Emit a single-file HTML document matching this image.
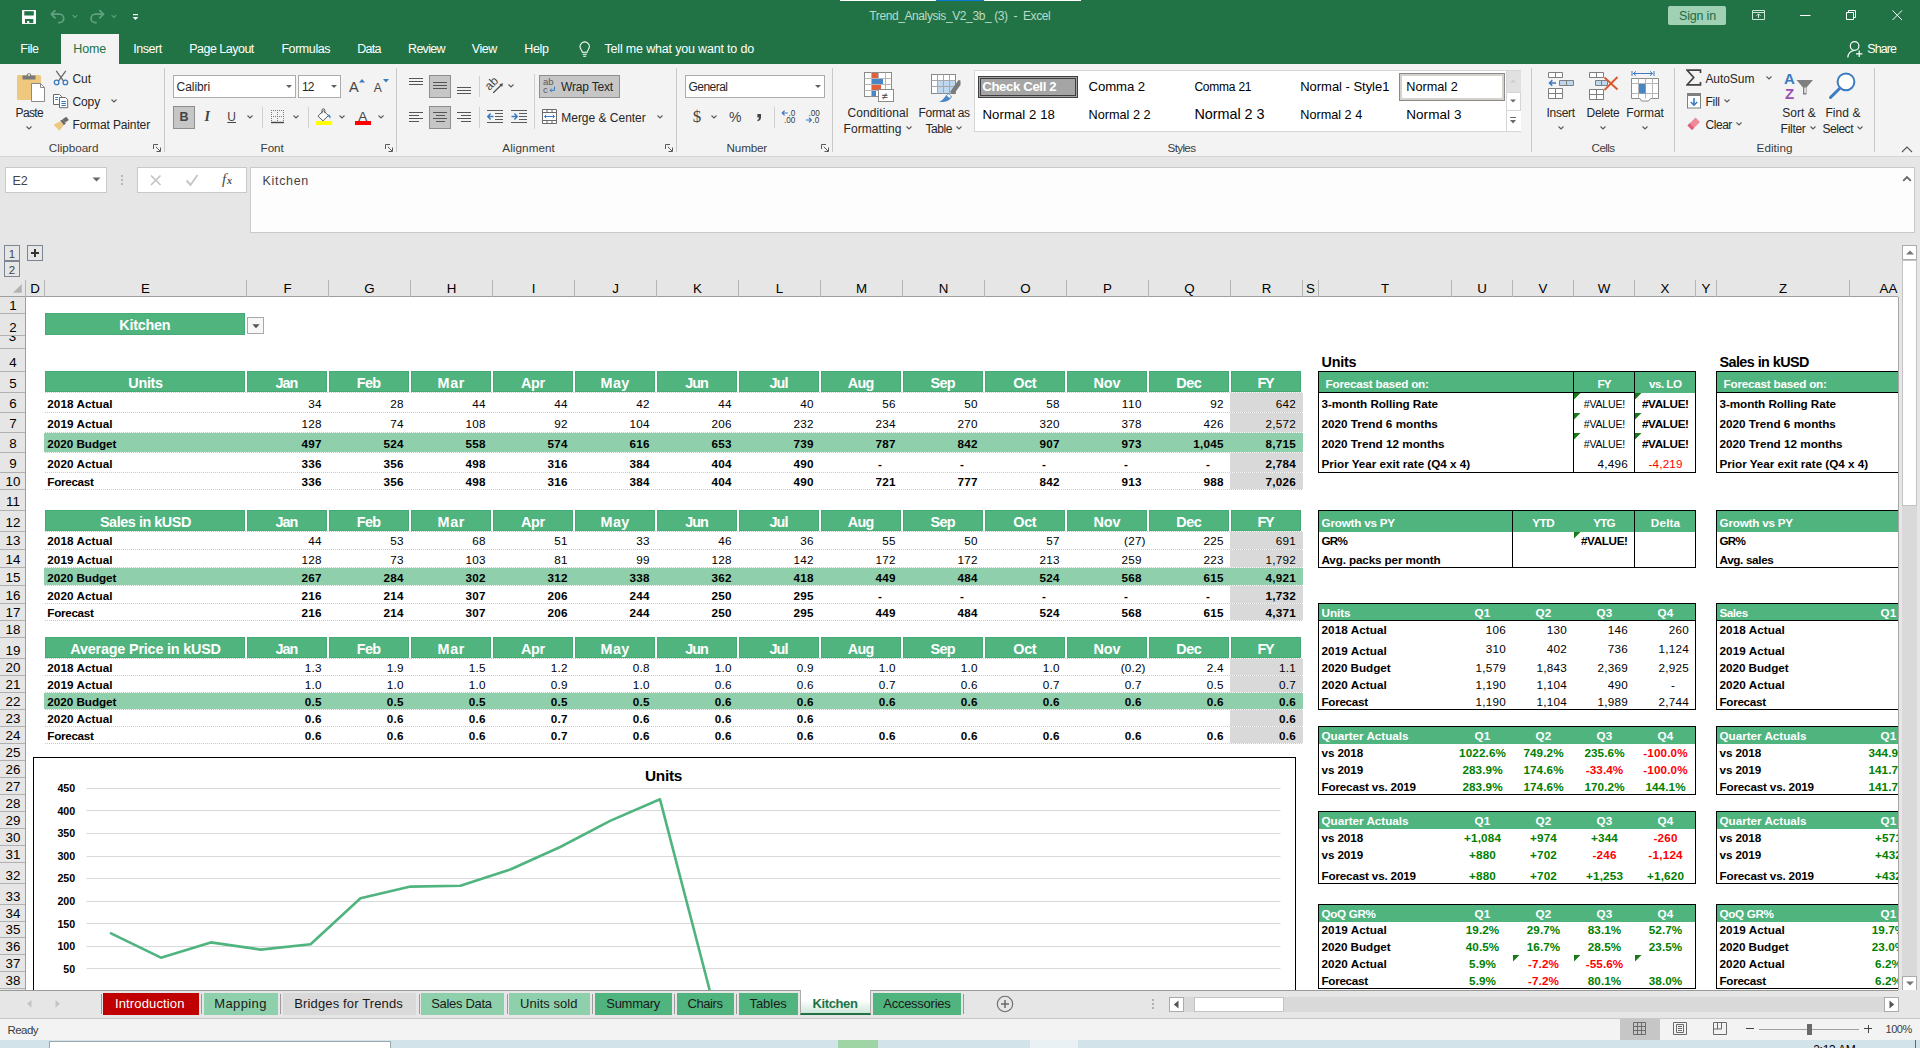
<!DOCTYPE html>
<html><head><meta charset="utf-8"><title>Trend_Analysis_V2_3b_ (3) - Excel</title>
<style>
html,body{margin:0;padding:0;background:#fff}
body{width:1920px;height:1048px;overflow:hidden;position:relative;font-family:"Liberation Sans",sans-serif}
#app{position:absolute;left:0;top:0;width:1920px;height:1048px;overflow:hidden}
#app div,#app svg{position:absolute}
.t{white-space:pre;line-height:16px;height:16px}
#gridclip{left:0;top:0;width:1898px;height:990px;overflow:hidden}
</style></head><body><div id="app">
<div style="left:0px;top:0px;width:1920px;height:64px;background:#217346;"></div>
<div style="left:840px;top:0px;width:241px;height:1px;background:#ffffff;"></div>
<div style="left:936px;top:0px;width:48px;height:1px;background:#0a78d4;"></div>
<svg style="left:0;top:0" width="160" height="32" viewBox="0 0 160 32">
<rect x="22" y="10" width="14" height="14" rx="0.800" fill="#fff"/>
<rect x="24.300" y="11.200" width="9.500" height="4.300" fill="#217346"/>
<rect x="25" y="19" width="8.300" height="4.100" fill="#217346"/>
<rect x="27.100" y="21" width="2.200" height="2.100" fill="#fff"/>
<g fill="none" stroke="#62a17f" stroke-width="1.800" stroke-linecap="round" stroke-linejoin="round">
<path d="M55 10.600L51.300 14.200 55 17.800"/><path d="M51.800 14.200h7.700a4.200 4.200 0 0 1 0 8.400h-.8"/>
<path d="M99.800 10.600l3.700 3.600-3.700 3.600"/><path d="M103 14.200h-7.700a4.200 4.200 0 0 0 0 8.400h.8"/>
</g>
<g fill="none" stroke="#62a17f" stroke-width="1.100"><path d="M72.600 15.200l2.300 2.300 2.300-2.300"/><path d="M111.600 15.200l2.300 2.300 2.300-2.300"/></g>
<rect x="133" y="14" width="5" height="1.200" fill="#fff"/><path d="M132.700 17h5.600l-2.800 3z" fill="#fff"/>
</svg>
<div class="t" style="left:869.30px;top:8px;font-size:12px;letter-spacing:-0.400px;color:#b9dcc6;">Trend_Analysis_V2_3b_ (3)  -  Excel</div>
<div style="left:1668px;top:6px;width:58px;height:19px;background:#a1d1b5;border-radius:2px;"></div>
<div class="t" style="left:1679.00px;top:8px;font-size:12.5px;letter-spacing:-0.174px;color:#1e6b41;">Sign in</div>
<svg style="left:1745px;top:5px" width="170" height="22" viewBox="0 0 170 22"><g fill="none" stroke="#cfe6d8" stroke-width="1">
<path d="M7.5 5.5h12v9h-12z"/><path d="M7.5 7.5h12"/><path d="M13.5 13v-4m-2 1.8l2-2 2 2"/>
<path d="M55 10.5h10.5" stroke="#fff"/>
<path d="M101.500 7.500h7v7h-7z" stroke="#fff"/><path d="M103.500 7.500v-2h7v7h-2" stroke="#fff"/>
<path d="M147.5 5.5l9.5 9.5m0-9.5l-9.5 9.5" stroke="#fff"/>
</g></svg>
<div style="left:61px;top:34px;width:58px;height:30px;background:#f3f3f3;"></div>
<div class="t" style="left:20.30px;top:41px;font-size:12.5px;letter-spacing:-0.535px;color:#fff;">File</div>
<div class="t" style="left:73.30px;top:41px;font-size:12.5px;letter-spacing:-0.161px;color:#217346;">Home</div>
<div class="t" style="left:133.30px;top:41px;font-size:12.5px;letter-spacing:-0.477px;color:#fff;">Insert</div>
<div class="t" style="left:189.20px;top:41px;font-size:12.5px;letter-spacing:-0.509px;color:#fff;">Page Layout</div>
<div class="t" style="left:281.40px;top:41px;font-size:12.5px;letter-spacing:-0.424px;color:#fff;">Formulas</div>
<div class="t" style="left:357.20px;top:41px;font-size:12.5px;letter-spacing:-0.701px;color:#fff;">Data</div>
<div class="t" style="left:408.10px;top:41px;font-size:12.5px;letter-spacing:-0.731px;color:#fff;">Review</div>
<div class="t" style="left:471.80px;top:41px;font-size:12.5px;letter-spacing:-0.492px;color:#fff;">View</div>
<div class="t" style="left:524.30px;top:41px;font-size:12.5px;letter-spacing:-0.327px;color:#fff;">Help</div>
<div class="t" style="left:604.50px;top:41px;font-size:12.5px;letter-spacing:-0.176px;color:#fff;">Tell me what you want to do</div>
<svg style="left:577px;top:40px" width="16" height="18" viewBox="0 0 16 18"><g fill="none" stroke="#fff" stroke-width="1.1"><path d="M5.3 12.2c0-1.8-2.3-2.9-2.3-5.6a4.7 4.7 0 0 1 9.4 0c0 2.7-2.3 3.8-2.3 5.6z"/><path d="M5.6 14.3h4.2M6.2 16.2h3"/></g></svg>
<svg style="left:1846px;top:40px" width="20" height="19" viewBox="0 0 20 19"><g fill="none" stroke="#fff" stroke-width="1.2"><circle cx="8.6" cy="6" r="4.3"/><path d="M1.8 17.5c.4-4.2 3-6.6 6.3-7"/><path d="M13.2 10.6v6.4M10 13.8h6.4"/></g></svg>
<div class="t" style="left:1867.20px;top:41px;font-size:12.5px;letter-spacing:-0.871px;color:#fff;">Share</div>
<div style="left:0px;top:64px;width:1920px;height:92px;background:#f3f3f3;"></div>
<div style="left:0px;top:156px;width:1920px;height:1px;background:#d4d4d4;"></div>
<div style="left:164px;top:68px;width:1px;height:84px;background:#c9c9c9;"></div>
<div style="left:396px;top:68px;width:1px;height:84px;background:#c9c9c9;"></div>
<div style="left:676px;top:68px;width:1px;height:84px;background:#c9c9c9;"></div>
<div style="left:832px;top:68px;width:1px;height:84px;background:#c9c9c9;"></div>
<div style="left:1531px;top:68px;width:1px;height:84px;background:#c9c9c9;"></div>
<div style="left:1674px;top:68px;width:1px;height:84px;background:#c9c9c9;"></div>
<div style="left:1874px;top:68px;width:1px;height:84px;background:#c9c9c9;"></div>
<div style="left:262px;top:107px;width:1px;height:21px;background:#d0d0d0;"></div>
<div style="left:308px;top:107px;width:1px;height:21px;background:#d0d0d0;"></div>
<div style="left:479px;top:76px;width:1px;height:21px;background:#d0d0d0;"></div>
<div style="left:479px;top:107px;width:1px;height:21px;background:#d0d0d0;"></div>
<div style="left:534px;top:74px;width:1px;height:55px;background:#d0d0d0;"></div>
<div style="left:774px;top:107px;width:1px;height:21px;background:#d0d0d0;"></div>
<div class="t" style="left:48.75px;top:139.5px;font-size:11.7px;letter-spacing:-0.037px;color:#3c3c3c;">Clipboard</div>
<div class="t" style="left:260.60px;top:139.5px;font-size:11.7px;letter-spacing:-0.065px;color:#3c3c3c;">Font</div>
<div class="t" style="left:502.25px;top:139.5px;font-size:11.7px;letter-spacing:0.080px;color:#3c3c3c;">Alignment</div>
<div class="t" style="left:726.60px;top:139.5px;font-size:11.7px;letter-spacing:-0.202px;color:#3c3c3c;">Number</div>
<div class="t" style="left:1167.50px;top:139.5px;font-size:11.7px;letter-spacing:-0.660px;color:#3c3c3c;">Styles</div>
<div class="t" style="left:1591.60px;top:139.5px;font-size:11.7px;letter-spacing:-0.601px;color:#3c3c3c;">Cells</div>
<div class="t" style="left:1756.60px;top:139.5px;font-size:11.7px;letter-spacing:0.018px;color:#3c3c3c;">Editing</div>
<svg style="left:153px;top:144px" width="9" height="9" viewBox="0 0 9 9"><g fill="none" stroke="#5a5a5a" stroke-width="1"><path d="M.5 5V.5H5"/><path d="M2.800 2.800l4.400 4.400"/><path d="M3.500 7.500h4v-4"/></g></svg>
<svg style="left:385px;top:144px" width="9" height="9" viewBox="0 0 9 9"><g fill="none" stroke="#5a5a5a" stroke-width="1"><path d="M.5 5V.5H5"/><path d="M2.800 2.800l4.400 4.400"/><path d="M3.500 7.500h4v-4"/></g></svg>
<svg style="left:665px;top:144px" width="9" height="9" viewBox="0 0 9 9"><g fill="none" stroke="#5a5a5a" stroke-width="1"><path d="M.5 5V.5H5"/><path d="M2.800 2.800l4.400 4.400"/><path d="M3.500 7.500h4v-4"/></g></svg>
<svg style="left:821px;top:144px" width="9" height="9" viewBox="0 0 9 9"><g fill="none" stroke="#5a5a5a" stroke-width="1"><path d="M.5 5V.5H5"/><path d="M2.800 2.800l4.400 4.400"/><path d="M3.500 7.500h4v-4"/></g></svg>
<div class="t" style="left:15.60px;top:105px;font-size:12px;letter-spacing:-0.637px;color:#262626;">Paste</div>
<svg style="left:25px;top:125px" width="8" height="6" viewBox="0 0 8 6"><path d="M1.5 1.5L4 4l2.5-2.5" fill="none" stroke="#5a5a5a" stroke-width="1.1"/></svg>
<div class="t" style="left:72.50px;top:71px;font-size:12px;letter-spacing:-0.058px;color:#262626;">Cut</div>
<div class="t" style="left:72.50px;top:94px;font-size:12px;letter-spacing:-0.128px;color:#262626;">Copy</div>
<svg style="left:109.75px;top:98px" width="8" height="6" viewBox="0 0 8 6"><path d="M1.5 1.5L4 4l2.5-2.5" fill="none" stroke="#5a5a5a" stroke-width="1.1"/></svg>
<div class="t" style="left:72.50px;top:117px;font-size:12px;letter-spacing:-0.133px;color:#262626;">Format Painter</div>
<svg style="left:16px;top:70px" width="30" height="33" viewBox="0 0 30 33">
<rect x="1" y="5" width="24" height="25" rx="1.5" fill="#edc87e"/>
<path d="M6.5 9.5v-4h4.2a2.3 2.3 0 0 1 4.6 0h4.2v4z" fill="#7a7a7a"/><circle cx="13" cy="5" r="1" fill="#f3f3f3"/>
<path d="M15.5 13.5h9l4 4v14h-13z" fill="#fff" stroke="#8a8a8a" stroke-width="1"/><path d="M24.5 13.5v4h4" fill="none" stroke="#8a8a8a"/>
</svg>
<svg style="left:53px;top:70px" width="16" height="16" viewBox="0 0 16 16"><g fill="none" stroke-width="1.3"><path d="M3.2.8l7.4 10.4M12.8.8L5.4 11.2" stroke="#6a6a6a"/><circle cx="3.6" cy="12.4" r="2.3" stroke="#3b7bbf"/><circle cx="12.4" cy="12.4" r="2.3" stroke="#3b7bbf"/></g></svg>
<svg style="left:52px;top:93px" width="17" height="16" viewBox="0 0 17 16"><g fill="#fff" stroke="#6a6a6a" stroke-width="1"><path d="M1.5 1.5h6l2 2v8h-8z"/><path d="M7.5 4.5h6l2.2 2.2v8h-8.2z"/></g><path d="M3.2 4.5h3M3.2 6.5h3M9.4 8.5h4.5M9.4 10.5h4.5M9.4 12.5h4.5" stroke="#3b7bbf" stroke-width="1"/></svg>
<svg style="left:53px;top:116px" width="17" height="16" viewBox="0 0 17 16"><path d="M9.5 3.2l3.8-2.4 2.6 3.2-3.8 2.4z" fill="#6a6a6a"/><path d="M7.2 4.6l2.6-1 3 3.8-2 1.8z" fill="#6a6a6a"/><path d="M.6 8.8l6.8-3.6 3.2 4.2-4.2 5.4z" fill="#edc87e"/></svg>
<div style="left:173px;top:75px;width:123px;height:23px;background:#fff;border:1px solid #ababab;box-sizing:border-box;"></div>
<div class="t" style="left:176.60px;top:79px;font-size:12px;letter-spacing:-0.073px;color:#262626;">Calibri</div>
<svg style="left:285.5px;top:85.0px" width="6" height="3" viewBox="0 0 6 3"><path d="M0 0h6L3.0 3z" fill="#5f5f5f"/></svg>
<div style="left:298px;top:75px;width:43px;height:23px;background:#fff;border:1px solid #ababab;box-sizing:border-box;"></div>
<div class="t" style="left:302.00px;top:79px;font-size:12px;letter-spacing:-0.924px;color:#262626;">12</div>
<svg style="left:330.5px;top:85.0px" width="6" height="3" viewBox="0 0 6 3"><path d="M0 0h6L3.0 3z" fill="#5f5f5f"/></svg>
<div style="left:685px;top:75px;width:140px;height:23px;background:#fff;border:1px solid #ababab;box-sizing:border-box;"></div>
<div class="t" style="left:688.50px;top:79px;font-size:12px;letter-spacing:-0.527px;color:#262626;">General</div>
<svg style="left:814.5px;top:85.0px" width="6" height="3" viewBox="0 0 6 3"><path d="M0 0h6L3.0 3z" fill="#5f5f5f"/></svg>
<div class="t" style="left:349.00px;top:79px;font-size:14.5px;color:#444;">A</div>
<svg style="left:359px;top:79px" width="6" height="4"><path d="M0 3.5h6L3 0z" fill="#3b7bbf"/></svg>
<div class="t" style="left:373.70px;top:80px;font-size:12px;color:#444;">A</div>
<svg style="left:383px;top:79px" width="6" height="4"><path d="M0 0h6L3 3.5z" fill="#3b7bbf"/></svg>
<div style="left:173px;top:106px;width:22px;height:23px;background:#c6c6c6;border:1px solid #8e8e8e;box-sizing:border-box;"></div>
<div class="t" style="left:179.60px;top:109px;font-size:12.5px;font-weight:bold;color:#444;">B</div>
<div class="t" style="left:204.50px;top:108.5px;font-size:14px;font-weight:bold;font-style:italic;color:#444;font-family:'Liberation Serif',serif;">I</div>
<div class="t" style="left:227.30px;top:109px;font-size:12px;color:#444;text-decoration:underline;">U</div>
<svg style="left:246px;top:114.3px" width="8" height="6" viewBox="0 0 8 6"><path d="M1.5 1.5L4 4l2.5-2.5" fill="none" stroke="#5a5a5a" stroke-width="1.1"/></svg>
<svg style="left:271px;top:110px" width="14" height="14" viewBox="0 0 14 14"><g stroke="#7a7a7a" stroke-width="1" stroke-dasharray="1 1"><path d="M.5 0v12M6.5 0v12M12.5 0v12M0 .5h13M0 6.5h13"/></g><path d="M0 12.5h13" stroke="#444" stroke-width="1.4"/></svg>
<svg style="left:292px;top:114.3px" width="8" height="6" viewBox="0 0 8 6"><path d="M1.5 1.5L4 4l2.5-2.5" fill="none" stroke="#5a5a5a" stroke-width="1.1"/></svg>
<svg style="left:315px;top:108px" width="18" height="18" viewBox="0 0 18 18"><path d="M3 8.2l5.4-5.6 5 5-5.4 5.2z" fill="#fff" stroke="#5a5a5a" stroke-width="1"/><path d="M7 5.5V2.2a1.4 1.4 0 0 1 2.8 0V5" fill="none" stroke="#5a5a5a"/><path d="M13.6 6.5c1.6.6 2.6 2 1.6 4.2c-.6-1.4-1.4-2.2-2.6-2.8z" fill="#3b7bbf"/><rect x="1" y="13" width="16.2" height="4" fill="#ffff00"/></svg>
<svg style="left:338px;top:114.3px" width="8" height="6" viewBox="0 0 8 6"><path d="M1.5 1.5L4 4l2.5-2.5" fill="none" stroke="#5a5a5a" stroke-width="1.1"/></svg>
<div class="t" style="left:358.20px;top:108.5px;font-size:13.5px;color:#444;">A</div>
<div style="left:355px;top:121px;width:16.2px;height:4px;background:#ff0000;"></div>
<svg style="left:377px;top:114.3px" width="8" height="6" viewBox="0 0 8 6"><path d="M1.5 1.5L4 4l2.5-2.5" fill="none" stroke="#5a5a5a" stroke-width="1.1"/></svg>
<div style="left:409px;top:78px;width:14px;height:1px;background:#555;"></div>
<div style="left:409px;top:81px;width:14px;height:1px;background:#555;"></div>
<div style="left:409px;top:84px;width:14px;height:1px;background:#555;"></div>
<div style="left:429px;top:75px;width:22px;height:23px;background:#c6c6c6;border:1px solid #8e8e8e;box-sizing:border-box;"></div>
<div style="left:433px;top:82px;width:14px;height:1px;background:#555;"></div>
<div style="left:433px;top:85px;width:14px;height:1px;background:#555;"></div>
<div style="left:433px;top:88px;width:14px;height:1px;background:#555;"></div>
<div style="left:457px;top:87px;width:14px;height:1px;background:#555;"></div>
<div style="left:457px;top:90px;width:14px;height:1px;background:#555;"></div>
<div style="left:457px;top:93px;width:14px;height:1px;background:#555;"></div>
<div style="left:409px;top:112px;width:14px;height:1px;background:#555;"></div>
<div style="left:409px;top:115px;width:10px;height:1px;background:#555;"></div>
<div style="left:409px;top:118px;width:14px;height:1px;background:#555;"></div>
<div style="left:409px;top:121px;width:10px;height:1px;background:#555;"></div>
<div style="left:429px;top:106px;width:22px;height:23px;background:#c6c6c6;border:1px solid #8e8e8e;box-sizing:border-box;"></div>
<div style="left:433.0px;top:112px;width:14px;height:1px;background:#555;"></div>
<div style="left:435.5px;top:115px;width:9px;height:1px;background:#555;"></div>
<div style="left:433.0px;top:118px;width:14px;height:1px;background:#555;"></div>
<div style="left:435.5px;top:121px;width:9px;height:1px;background:#555;"></div>
<div style="left:457px;top:112px;width:14px;height:1px;background:#555;"></div>
<div style="left:461px;top:115px;width:10px;height:1px;background:#555;"></div>
<div style="left:457px;top:118px;width:14px;height:1px;background:#555;"></div>
<div style="left:461px;top:121px;width:10px;height:1px;background:#555;"></div>
<svg style="left:484px;top:75px" width="22" height="20" viewBox="0 0 22 20"><text x="5.600" y="16" font-size="12" fill="#444" transform="rotate(-45 5.600 16)" font-family="Liberation Sans">ab</text><path d="M9.300 17.700L17 10.200" stroke="#4a4a4a" stroke-width="1.200" fill="none"/><path d="M19 8.300l-3.600 .9 2.700 2.700z" fill="#4a4a4a"/></svg>
<svg style="left:507px;top:83px" width="8" height="6" viewBox="0 0 8 6"><path d="M1.5 1.5L4 4l2.5-2.5" fill="none" stroke="#5a5a5a" stroke-width="1.1"/></svg>
<svg style="left:487px;top:109px" width="17" height="15" viewBox="0 0 17 15"><path d="M0 1.5h16M8 4.5h8M8 7.5h8M8 10.5h8M0 13.5h16" stroke="#5a5a5a"/><path d="M6.5 7.5H.8M3.6 4.6L.8 7.5l2.8 2.9" fill="none" stroke="#3b7bbf" stroke-width="1.5"/></svg>
<svg style="left:511px;top:109px" width="17" height="15" viewBox="0 0 17 15"><path d="M0 1.5h16M8 4.5h8M8 7.5h8M8 10.5h8M0 13.5h16" stroke="#5a5a5a"/><path d="M.5 7.5h5.7M3.4 4.6l2.8 2.9-2.8 2.9" fill="none" stroke="#3b7bbf" stroke-width="1.5"/></svg>
<div style="left:539px;top:75px;width:81px;height:23px;background:#c6c6c6;border:1px solid #8e8e8e;box-sizing:border-box;"></div>
<svg style="left:543px;top:77px" width="14" height="18" viewBox="0 0 14 18"><text x="0" y="8" font-size="9.5" fill="#5a5a5a" font-family="Liberation Sans">ab</text><text x="0" y="15.5" font-size="9.5" fill="#5a5a5a" font-family="Liberation Sans">c</text><path d="M11.5 9.5v3.8H7.2M8.8 11.5l-1.8 1.8 1.8 1.8" fill="none" stroke="#3b7bbf" stroke-width="1"/></svg>
<div class="t" style="left:561.00px;top:79px;font-size:12px;letter-spacing:-0.175px;color:#262626;">Wrap Text</div>
<svg style="left:541px;top:108px" width="17" height="17" viewBox="0 0 17 17"><g fill="#fff" stroke="#6a6a6a"><path d="M1.5 1.5h14v14h-14z"/><path d="M1.5 4.5h14M1.5 12.5h14M6 1.5v3M11 1.5v3M6 12.5v3M11 12.5v3"/></g><path d="M3.5 8.5h10M5.2 6.8L3.5 8.5l1.7 1.7M11.8 6.8l1.7 1.7-1.7 1.7" fill="none" stroke="#3b7bbf"/></svg>
<div class="t" style="left:561.25px;top:110px;font-size:12px;letter-spacing:-0.015px;color:#262626;">Merge &amp; Center</div>
<svg style="left:656px;top:114.3px" width="8" height="6" viewBox="0 0 8 6"><path d="M1.5 1.5L4 4l2.5-2.5" fill="none" stroke="#5a5a5a" stroke-width="1.1"/></svg>
<div class="t" style="left:692.80px;top:108.5px;font-size:17px;color:#444;font-family:'Liberation Serif',serif;">$</div>
<svg style="left:710px;top:114.3px" width="8" height="6" viewBox="0 0 8 6"><path d="M1.5 1.5L4 4l2.5-2.5" fill="none" stroke="#5a5a5a" stroke-width="1.1"/></svg>
<div class="t" style="left:729.00px;top:109px;font-size:14px;color:#444;">%</div>
<svg style="left:756px;top:113.500px" width="6" height="8" viewBox="0 0 6 8"><path d="M1.400 0h3.600v3.300c0 2.200-1.200 3.500-3.600 3.900v-1.300c1.100-.3 1.700-1.100 1.700-2.300H1.400z" fill="#444"/></svg>
<svg style="left:781px;top:109px" width="16" height="15" viewBox="0 0 16 15"><path d="M1.4 4h5.4M3.6 1.6L1.2 4l2.4 2.4" fill="none" stroke="#3b7bbf" stroke-width="1.2"/><text x="7.5" y="6.8" font-size="8.200" fill="#3a3a3a" font-family="Liberation Sans">.0</text><text x="3" y="14" font-size="8.200" fill="#3a3a3a" font-family="Liberation Sans">.00</text></svg>
<svg style="left:805px;top:109px" width="16" height="15" viewBox="0 0 16 15"><text x="3.5" y="6.8" font-size="8.200" fill="#3a3a3a" font-family="Liberation Sans">.00</text><path d="M.8 11h5.4M4 8.6L6.4 11 4 13.4" fill="none" stroke="#3b7bbf" stroke-width="1.2"/><text x="7.5" y="14" font-size="8.200" fill="#3a3a3a" font-family="Liberation Sans">.0</text></svg>
<div class="t" style="left:847.50px;top:105px;font-size:12px;letter-spacing:0.087px;color:#262626;">Conditional</div>
<div class="t" style="left:843.50px;top:121px;font-size:12px;letter-spacing:0.075px;color:#262626;">Formatting</div>
<svg style="left:905px;top:125px" width="8" height="6" viewBox="0 0 8 6"><path d="M1.5 1.5L4 4l2.5-2.5" fill="none" stroke="#5a5a5a" stroke-width="1.1"/></svg>
<div class="t" style="left:918.50px;top:105px;font-size:12px;letter-spacing:-0.307px;color:#262626;">Format as</div>
<div class="t" style="left:925.60px;top:121px;font-size:12px;letter-spacing:-0.478px;color:#262626;">Table</div>
<svg style="left:955px;top:125px" width="8" height="6" viewBox="0 0 8 6"><path d="M1.5 1.5L4 4l2.5-2.5" fill="none" stroke="#5a5a5a" stroke-width="1.1"/></svg>
<svg style="left:863px;top:71px" width="32" height="32" viewBox="0 0 32 32"><rect x="1.5" y="1.5" width="27" height="24" fill="#fff" stroke="#8a8a8a"/><path d="M1.5 7.5h27M1.5 13.500h27M1.5 19.5h27M8.500 1.500v24M15.500 1.500v24M22.500 1.500v24" stroke="#b5b5b5"/><rect x="9" y="2" width="6" height="5" fill="#e0603a"/><rect x="9" y="8" width="11" height="5" fill="#4a86c5"/><rect x="9" y="14" width="9" height="5" fill="#e0603a"/><rect x="9" y="20" width="4" height="5" fill="#4a86c5"/><rect x="15.500" y="18.500" width="15" height="12" fill="#fff" stroke="#8a8a8a"/><text x="18.5" y="28.500" font-size="11" fill="#444" font-family="Liberation Sans">≠</text></svg>
<svg style="left:930px;top:73px" width="32" height="30" viewBox="0 0 32 30"><rect x="1.5" y="1.5" width="24" height="19" fill="#fff" stroke="#8a8a8a"/><rect x="8" y="7" width="17" height="13" fill="#bdd7ee"/><path d="M1.5 7.500h24M1.500 13.5h24M7.500 1.5v19M13.500 1.5v19M19.500 1.5v19" stroke="#a8a8a8"/><path d="M20 19l8.500-12 2 .5v4.500l-7 9.500z" fill="#7a7a7a"/><path d="M8.500 29c5-1 6-6 10-8.500l3.500 3c-2 4-6 6-13.500 5.500z" fill="#4a86c5"/><ellipse cx="19" cy="23" rx="2" ry="1.300" fill="#fff" transform="rotate(35 19 23)"/></svg>
<div style="left:974px;top:70px;width:547px;height:62px;background:#fff;border:1px solid #d6d6d6;box-sizing:border-box;"></div>
<div style="left:978px;top:76px;width:100px;height:22px;background:#a5a5a5;border:3px double #3f3f3f;box-sizing:border-box;"></div>
<div class="t" style="left:982.25px;top:78.5px;font-size:13.2px;letter-spacing:-0.375px;font-weight:bold;color:#fff;">Check Cell 2</div>
<div class="t" style="left:982.50px;top:106.5px;font-size:13.2px;letter-spacing:0.055px;color:#000;">Normal 2 18</div>
<div class="t" style="left:1088.50px;top:78.5px;font-size:13.2px;letter-spacing:-0.102px;color:#000;">Comma 2</div>
<div class="t" style="left:1194.40px;top:79px;font-size:12px;letter-spacing:-0.223px;color:#000;">Comma 21</div>
<div class="t" style="left:1088.50px;top:107px;font-size:12.7px;letter-spacing:-0.001px;color:#000;">Normal 2 2</div>
<div class="t" style="left:1194.40px;top:106px;font-size:14.4px;letter-spacing:-0.023px;color:#000;">Normal 2 3</div>
<div class="t" style="left:1300.25px;top:78.5px;font-size:13px;letter-spacing:-0.032px;color:#000;">Normal - Style1</div>
<div class="t" style="left:1300.25px;top:107px;font-size:12.7px;letter-spacing:-0.011px;color:#000;">Normal 2 4</div>
<div style="left:1399px;top:73px;width:106px;height:28px;background:#fff;border:1px solid #8a8a8a;box-shadow:inset 0 0 0 2px #d5d2cb;box-sizing:border-box;"></div>
<div class="t" style="left:1406.25px;top:79px;font-size:12.7px;letter-spacing:0.010px;color:#000;">Normal 2</div>
<div class="t" style="left:1406.25px;top:106.5px;font-size:13.5px;letter-spacing:0.054px;color:#000;">Normal 3</div>
<div style="left:1506px;top:71px;width:14px;height:21px;background:#e1e1e1;border-left:1px solid #d6d6d6;"></div>
<div style="left:1506px;top:92px;width:14px;height:19px;background:#fff;border:1px solid #d6d6d6;border-right:none;box-sizing:border-box;"></div>
<div style="left:1506px;top:111px;width:14px;height:20px;background:#fff;border-left:1px solid #d6d6d6;"></div>
<svg style="left:1510px;top:79px" width="6" height="4"><path d="M0 3.500h6L3 .5z" fill="#cdcdcd"/></svg>
<svg style="left:1510px;top:99px" width="6" height="4"><path d="M0 .5h6L3 3.500z" fill="#6a6a6a"/></svg>
<svg style="left:1510px;top:117px" width="6" height="8"><path d="M0 .5h6" stroke="#6a6a6a"/><path d="M0 3h6L3 6.500z" fill="#6a6a6a"/></svg>
<div class="t" style="left:1546.50px;top:105px;font-size:12px;letter-spacing:-0.294px;color:#262626;">Insert</div>
<svg style="left:1557px;top:125px" width="8" height="6" viewBox="0 0 8 6"><path d="M1.5 1.5L4 4l2.5-2.5" fill="none" stroke="#5a5a5a" stroke-width="1.1"/></svg>
<div class="t" style="left:1586.60px;top:105px;font-size:12px;letter-spacing:-0.315px;color:#262626;">Delete</div>
<svg style="left:1599px;top:125px" width="8" height="6" viewBox="0 0 8 6"><path d="M1.5 1.5L4 4l2.5-2.5" fill="none" stroke="#5a5a5a" stroke-width="1.1"/></svg>
<div class="t" style="left:1626.25px;top:105px;font-size:12px;letter-spacing:-0.084px;color:#262626;">Format</div>
<svg style="left:1641px;top:125px" width="8" height="6" viewBox="0 0 8 6"><path d="M1.5 1.5L4 4l2.5-2.5" fill="none" stroke="#5a5a5a" stroke-width="1.1"/></svg>
<svg style="left:1547px;top:71px" width="28" height="29" viewBox="0 0 28 29"><g fill="#fff" stroke="#7f7f7f"><path d="M1.500 1.500h14v5h-14zM8.500 1.500v5"/><path d="M1.500 17.500h14v10h-14zM8.500 17.500v10M1.500 22.500h14"/></g><g fill="#bdd7ee" stroke="#7f7f7f"><path d="M12.500 9.500h14v5h-14zM19.500 9.500v5"/></g><path d="M9 12H2.500M5.300 9.200L2.500 12l2.800 2.800" fill="none" stroke="#3b7bbf" stroke-width="1.600"/></svg>
<svg style="left:1588px;top:71px" width="32" height="30" viewBox="0 0 32 30"><g fill="#fff" stroke="#7f7f7f"><path d="M1.500 1.500h14v5h-14zM8.500 1.500v5"/><path d="M1.500 18.500h14v10h-14zM8.500 18.500v10M1.500 23.500h14"/></g><g fill="#bdd7ee" stroke="#7f7f7f"><path d="M7.500 9.500h12v5h-12zM13.500 9.500v5"/></g><path d="M16.500 6.500l13 12M29.500 6l-13 13" fill="none" stroke="#d9572b" stroke-width="1.800"/></svg>
<svg style="left:1630px;top:70px" width="30" height="32" viewBox="0 0 30 32"><path d="M2 1v5M24 1v5M3.500 3.500h19M6 1.300L3.500 3.500 6 5.700M20 1.300l2.500 2.200L20 5.700" fill="none" stroke="#3b7bbf"/><path d="M1.500 8.500h27v20h-8l-2 2.500h-7l-1.500-2.500h-8.500z" fill="#fff" stroke="#8a8a8a"/><path d="M1.500 13.500h27M1.500 23.500h27M8.500 8.500v20M15.500 8.500v20M22.500 8.500v20" stroke="#b5b5b5"/><rect x="9" y="14" width="6.500" height="9.500" fill="#4a86c5"/></svg>
<svg style="left:1686px;top:69px" width="16" height="17" viewBox="0 0 16 17"><path d="M14.500 4V1.200H1.200l6.500 7.300-6.500 7.300h13.300V13" fill="none" stroke="#444" stroke-width="1.700"/></svg>
<div class="t" style="left:1705.40px;top:71px;font-size:12px;letter-spacing:-0.051px;color:#262626;">AutoSum</div>
<svg style="left:1765px;top:75px" width="8" height="6" viewBox="0 0 8 6"><path d="M1.5 1.5L4 4l2.5-2.5" fill="none" stroke="#5a5a5a" stroke-width="1.1"/></svg>
<svg style="left:1686px;top:92px" width="16" height="17" viewBox="0 0 16 17"><rect x="1.500" y="1.500" width="13" height="14.500" fill="#fff" stroke="#7f7f7f"/><rect x="1" y="1" width="14" height="3" fill="#7f7f7f"/><path d="M8 6v7M4.800 10L8 13.200 11.200 10" fill="none" stroke="#3b7bbf" stroke-width="1.600"/></svg>
<div class="t" style="left:1705.60px;top:94px;font-size:12px;letter-spacing:-0.332px;color:#262626;">Fill</div>
<svg style="left:1723px;top:98px" width="8" height="6" viewBox="0 0 8 6"><path d="M1.5 1.5L4 4l2.5-2.5" fill="none" stroke="#5a5a5a" stroke-width="1.1"/></svg>
<svg style="left:1686px;top:116px" width="16" height="15" viewBox="0 0 16 15"><path d="M1.500 9.500l8-8 4.500 4.500-8 8z" fill="#f08a9b"/><path d="M1.500 9.500l2.200-2.200 4.500 4.500L6 14z" fill="#e0607a"/></svg>
<div class="t" style="left:1705.60px;top:117px;font-size:12px;letter-spacing:-0.475px;color:#262626;">Clear</div>
<svg style="left:1735.4px;top:121px" width="8" height="6" viewBox="0 0 8 6"><path d="M1.5 1.5L4 4l2.5-2.5" fill="none" stroke="#5a5a5a" stroke-width="1.1"/></svg>
<div class="t" style="left:1784.00px;top:70.5px;font-size:15px;color:#3b7bbf;font-weight:bold;">A</div>
<div class="t" style="left:1785.00px;top:85.5px;font-size:15px;color:#9b4fb5;font-weight:bold;">Z</div>
<svg style="left:1796px;top:79px" width="18" height="17" viewBox="0 0 18 17"><path d="M.5 1h16.500l-6.500 7.500v7h-3.500v-7z" fill="#7f7f7f"/><rect x="8.300" y="8.500" width="1.500" height="5.500" fill="#f3f3f3"/></svg>
<div class="t" style="left:1782.25px;top:105px;font-size:12px;letter-spacing:0.009px;color:#262626;">Sort &amp;</div>
<div class="t" style="left:1780.60px;top:121px;font-size:12px;letter-spacing:-0.278px;color:#262626;">Filter</div>
<svg style="left:1808.9px;top:125px" width="8" height="6" viewBox="0 0 8 6"><path d="M1.5 1.5L4 4l2.5-2.5" fill="none" stroke="#5a5a5a" stroke-width="1.1"/></svg>
<svg style="left:1828px;top:70px" width="30" height="30" viewBox="0 0 30 30"><circle cx="18" cy="11.800" r="8.400" fill="#fff" stroke="#3b7bbf" stroke-width="2"/><path d="M11.800 18.200L2.500 27.500" stroke="#3b7bbf" stroke-width="3" stroke-linecap="round"/></svg>
<div class="t" style="left:1825.40px;top:105px;font-size:12px;letter-spacing:0.086px;color:#262626;">Find &amp;</div>
<div class="t" style="left:1822.50px;top:121px;font-size:12px;letter-spacing:-0.475px;color:#262626;">Select</div>
<svg style="left:1856px;top:125px" width="8" height="6" viewBox="0 0 8 6"><path d="M1.5 1.5L4 4l2.5-2.5" fill="none" stroke="#5a5a5a" stroke-width="1.1"/></svg>
<svg style="left:1901px;top:146px" width="12" height="7" viewBox="0 0 12 7"><path d="M1 6l5-5 5 5" fill="none" stroke="#555" stroke-width="1.100"/></svg>
<div style="left:0px;top:157px;width:1920px;height:140px;background:#e6e6e6;"></div>
<div style="left:5px;top:167px;width:102px;height:26px;background:#fff;border:1px solid #c9c9c9;box-sizing:border-box;"></div>
<div class="t" style="left:12.50px;top:173px;font-size:12.5px;color:#444;">E2</div>
<svg style="left:92px;top:177px" width="9" height="5"><path d="M.5 .5h8L4.500 4.500z" fill="#666"/></svg>
<div style="left:121px;top:175px;width:2px;height:2px;background:#b6b6b6;"></div>
<div style="left:121px;top:179px;width:2px;height:2px;background:#b6b6b6;"></div>
<div style="left:121px;top:183px;width:2px;height:2px;background:#b6b6b6;"></div>
<div style="left:137px;top:167px;width:110px;height:26px;background:#fff;border:1px solid #c9c9c9;box-sizing:border-box;"></div>
<svg style="left:137px;top:167px" width="110" height="26" viewBox="0 0 110 26"><path d="M14 8.500l9.500 9.500m0-9.500L14 18" stroke="#c2c2c2" stroke-width="1.600" fill="none"/><path d="M49.500 13.500l4 4.500 7-10" stroke="#c6c6c6" stroke-width="2" fill="none"/><text x="85" y="16.500" font-size="15" font-style="italic" fill="#4a4a4a" font-family="Liberation Serif">f</text><text x="90" y="17" font-size="10" font-style="italic" font-weight="bold" fill="#4a4a4a" font-family="Liberation Serif">x</text></svg>
<div style="left:250px;top:167px;width:1665px;height:66px;background:#fdfdfd;border:1px solid #c9c9c9;box-sizing:border-box;"></div>
<div class="t" style="left:262.50px;top:173px;font-size:12.5px;letter-spacing:0.687px;color:#444;">Kitchen</div>
<svg style="left:1902px;top:175px" width="10" height="7" viewBox="0 0 10 7"><path d="M1.200 5.800L5 2l3.800 3.800" fill="none" stroke="#666" stroke-width="1.800"/></svg>
<div style="left:4px;top:245px;width:16px;height:16px;background:#e6e6e6;border:1px solid #7c8594;box-sizing:border-box;"></div>
<div style="left:4px;top:261px;width:16px;height:16px;background:#e6e6e6;border:1px solid #7c8594;box-sizing:border-box;"></div>
<div class="t" style="left:8.80px;top:246px;font-size:11.5px;color:#444;">1</div>
<div class="t" style="left:8.80px;top:262px;font-size:11.5px;color:#444;">2</div>
<div style="left:27px;top:245px;width:16px;height:16px;background:#e6e6e6;border:1px solid #7c8594;box-sizing:border-box;"></div>
<div style="left:31px;top:252px;width:8px;height:2px;background:#333;"></div>
<div style="left:34px;top:249px;width:2px;height:8px;background:#333;"></div>
<div style="left:1898px;top:245px;width:22px;height:746px;background:#e6e6e6;"></div>
<div style="left:1898px;top:297px;width:1px;height:693px;background:#a6a6a6;"></div>
<div style="left:1902px;top:245px;width:15px;height:15px;background:#fff;border:1px solid #ababab;box-sizing:border-box;"></div>
<svg style="left:1906px;top:250px" width="8" height="5"><path d="M0 4.500h8L4 .5z" fill="#777"/></svg>
<div style="left:1902px;top:260px;width:15px;height:716px;background:#d9d9d9;"></div>
<div style="left:1902px;top:260px;width:15px;height:246px;background:#fff;border:1px solid #c4c4c4;box-sizing:border-box;"></div>
<div style="left:1902px;top:976px;width:15px;height:15px;background:#fff;border:1px solid #ababab;box-sizing:border-box;"></div>
<svg style="left:1906px;top:981px" width="8" height="5"><path d="M0 .5h8L4 4.500z" fill="#777"/></svg>
<div id="gridclip">
<div style="left:26px;top:297px;width:1872px;height:693px;background:#fff;"></div>
<div style="left:0px;top:280px;width:1898px;height:16px;background:#e6e6e6;"></div>
<div style="left:0px;top:296px;width:1898px;height:1px;background:#9e9e9e;"></div>
<div style="left:44px;top:280px;width:1px;height:17px;background:#b4b4b4;"></div>
<div class="t" style="left:30.19px;top:280.5px;font-size:13.33px;color:#000;">D</div>
<div style="left:246px;top:280px;width:1px;height:17px;background:#b4b4b4;"></div>
<div class="t" style="left:141.05px;top:280.5px;font-size:13.33px;color:#000;">E</div>
<div style="left:328px;top:280px;width:1px;height:17px;background:#b4b4b4;"></div>
<div class="t" style="left:283.43px;top:280.5px;font-size:13.33px;color:#000;">F</div>
<div style="left:410px;top:280px;width:1px;height:17px;background:#b4b4b4;"></div>
<div class="t" style="left:364.32px;top:280.5px;font-size:13.33px;color:#000;">G</div>
<div style="left:492px;top:280px;width:1px;height:17px;background:#b4b4b4;"></div>
<div class="t" style="left:446.69px;top:280.5px;font-size:13.33px;color:#000;">H</div>
<div style="left:574px;top:280px;width:1px;height:17px;background:#b4b4b4;"></div>
<div class="t" style="left:531.65px;top:280.5px;font-size:13.33px;color:#000;">I</div>
<div style="left:656px;top:280px;width:1px;height:17px;background:#b4b4b4;"></div>
<div class="t" style="left:612.17px;top:280.5px;font-size:13.33px;color:#000;">J</div>
<div style="left:738px;top:280px;width:1px;height:17px;background:#b4b4b4;"></div>
<div class="t" style="left:693.05px;top:280.5px;font-size:13.33px;color:#000;">K</div>
<div style="left:820px;top:280px;width:1px;height:17px;background:#b4b4b4;"></div>
<div class="t" style="left:775.79px;top:280.5px;font-size:13.33px;color:#000;">L</div>
<div style="left:902px;top:280px;width:1px;height:17px;background:#b4b4b4;"></div>
<div class="t" style="left:855.95px;top:280.5px;font-size:13.33px;color:#000;">M</div>
<div style="left:984px;top:280px;width:1px;height:17px;background:#b4b4b4;"></div>
<div class="t" style="left:938.69px;top:280.5px;font-size:13.33px;color:#000;">N</div>
<div style="left:1066px;top:280px;width:1px;height:17px;background:#b4b4b4;"></div>
<div class="t" style="left:1020.32px;top:280.5px;font-size:13.33px;color:#000;">O</div>
<div style="left:1148px;top:280px;width:1px;height:17px;background:#b4b4b4;"></div>
<div class="t" style="left:1103.05px;top:280.5px;font-size:13.33px;color:#000;">P</div>
<div style="left:1230px;top:280px;width:1px;height:17px;background:#b4b4b4;"></div>
<div class="t" style="left:1184.32px;top:280.5px;font-size:13.33px;color:#000;">Q</div>
<div style="left:1302px;top:280px;width:1px;height:17px;background:#b4b4b4;"></div>
<div class="t" style="left:1261.69px;top:280.5px;font-size:13.33px;color:#000;">R</div>
<div style="left:1318px;top:280px;width:1px;height:17px;background:#b4b4b4;"></div>
<div class="t" style="left:1306.05px;top:280.5px;font-size:13.33px;color:#000;">S</div>
<div style="left:1451px;top:280px;width:1px;height:17px;background:#b4b4b4;"></div>
<div class="t" style="left:1380.93px;top:280.5px;font-size:13.33px;color:#000;">T</div>
<div style="left:1512px;top:280px;width:1px;height:17px;background:#b4b4b4;"></div>
<div class="t" style="left:1477.19px;top:280.5px;font-size:13.33px;color:#000;">U</div>
<div style="left:1573px;top:280px;width:1px;height:17px;background:#b4b4b4;"></div>
<div class="t" style="left:1538.55px;top:280.5px;font-size:13.33px;color:#000;">V</div>
<div style="left:1634px;top:280px;width:1px;height:17px;background:#b4b4b4;"></div>
<div class="t" style="left:1597.71px;top:280.5px;font-size:13.33px;color:#000;">W</div>
<div style="left:1695px;top:280px;width:1px;height:17px;background:#b4b4b4;"></div>
<div class="t" style="left:1660.55px;top:280.5px;font-size:13.33px;color:#000;">X</div>
<div style="left:1716px;top:280px;width:1px;height:17px;background:#b4b4b4;"></div>
<div class="t" style="left:1701.55px;top:280.5px;font-size:13.33px;color:#000;">Y</div>
<div style="left:1849px;top:280px;width:1px;height:17px;background:#b4b4b4;"></div>
<div class="t" style="left:1778.93px;top:280.5px;font-size:13.33px;color:#000;">Z</div>
<div class="t" style="left:1879.61px;top:280.5px;font-size:13.33px;color:#000;">AA</div>
<div style="left:25px;top:280px;width:1px;height:17px;background:#b4b4b4;"></div>
<svg style="left:13px;top:284px" width="9" height="9"><path d="M8.800 0v8.800H0z" fill="#b3b3b3"/></svg>
<div style="left:0px;top:297px;width:25px;height:693px;background:#e6e6e6;"></div>
<div style="left:25px;top:297px;width:1px;height:693px;background:#9e9e9e;"></div>
<div style="left:0px;top:313px;width:25px;height:1px;background:#b0b0b0;"></div>
<div class="t" style="left:9.29px;top:297.5px;font-size:13.33px;color:#000;">1</div>
<div style="left:0px;top:335px;width:25px;height:1px;background:#b0b0b0;"></div>
<div class="t" style="left:9.29px;top:319.5px;font-size:13.33px;color:#000;">2</div>
<div style="left:0px;top:348px;width:25px;height:1px;background:#b0b0b0;"></div>
<div style="left:0;top:336px;width:25px;height:12px;overflow:hidden"><div class="t" style="left:8.800px;top:-7px;font-size:13.33px;color:#000">3</div></div>
<div style="left:0px;top:371px;width:25px;height:1px;background:#b0b0b0;"></div>
<div class="t" style="left:9.29px;top:354.5px;font-size:13.33px;color:#000;">4</div>
<div style="left:0px;top:392px;width:25px;height:1px;background:#b0b0b0;"></div>
<div class="t" style="left:9.29px;top:375.5px;font-size:13.33px;color:#000;">5</div>
<div style="left:0px;top:412px;width:25px;height:1px;background:#b0b0b0;"></div>
<div class="t" style="left:9.29px;top:395.5px;font-size:13.33px;color:#000;">6</div>
<div style="left:0px;top:432px;width:25px;height:1px;background:#b0b0b0;"></div>
<div class="t" style="left:9.29px;top:415.5px;font-size:13.33px;color:#000;">7</div>
<div style="left:0px;top:452px;width:25px;height:1px;background:#b0b0b0;"></div>
<div class="t" style="left:9.29px;top:435.5px;font-size:13.33px;color:#000;">8</div>
<div style="left:0px;top:472px;width:25px;height:1px;background:#b0b0b0;"></div>
<div class="t" style="left:9.29px;top:455.5px;font-size:13.33px;color:#000;">9</div>
<div style="left:0px;top:489px;width:25px;height:1px;background:#b0b0b0;"></div>
<div class="t" style="left:5.59px;top:473.5px;font-size:13.33px;color:#000;">10</div>
<div style="left:0px;top:510px;width:25px;height:1px;background:#b0b0b0;"></div>
<div class="t" style="left:6.08px;top:493.5px;font-size:13.33px;color:#000;">11</div>
<div style="left:0px;top:531px;width:25px;height:1px;background:#b0b0b0;"></div>
<div class="t" style="left:5.59px;top:514.5px;font-size:13.33px;color:#000;">12</div>
<div style="left:0px;top:549px;width:25px;height:1px;background:#b0b0b0;"></div>
<div class="t" style="left:5.59px;top:532.5px;font-size:13.33px;color:#000;">13</div>
<div style="left:0px;top:567px;width:25px;height:1px;background:#b0b0b0;"></div>
<div class="t" style="left:5.59px;top:551.5px;font-size:13.33px;color:#000;">14</div>
<div style="left:0px;top:585px;width:25px;height:1px;background:#b0b0b0;"></div>
<div class="t" style="left:5.59px;top:569.5px;font-size:13.33px;color:#000;">15</div>
<div style="left:0px;top:603px;width:25px;height:1px;background:#b0b0b0;"></div>
<div class="t" style="left:5.59px;top:587.5px;font-size:13.33px;color:#000;">16</div>
<div style="left:0px;top:620px;width:25px;height:1px;background:#b0b0b0;"></div>
<div class="t" style="left:5.59px;top:604.5px;font-size:13.33px;color:#000;">17</div>
<div style="left:0px;top:637px;width:25px;height:1px;background:#b0b0b0;"></div>
<div class="t" style="left:5.59px;top:621.5px;font-size:13.33px;color:#000;">18</div>
<div style="left:0px;top:658px;width:25px;height:1px;background:#b0b0b0;"></div>
<div class="t" style="left:5.59px;top:642.5px;font-size:13.33px;color:#000;">19</div>
<div style="left:0px;top:675px;width:25px;height:1px;background:#b0b0b0;"></div>
<div class="t" style="left:5.59px;top:659.5px;font-size:13.33px;color:#000;">20</div>
<div style="left:0px;top:692px;width:25px;height:1px;background:#b0b0b0;"></div>
<div class="t" style="left:5.59px;top:676.5px;font-size:13.33px;color:#000;">21</div>
<div style="left:0px;top:709px;width:25px;height:1px;background:#b0b0b0;"></div>
<div class="t" style="left:5.59px;top:693.5px;font-size:13.33px;color:#000;">22</div>
<div style="left:0px;top:726px;width:25px;height:1px;background:#b0b0b0;"></div>
<div class="t" style="left:5.59px;top:710.5px;font-size:13.33px;color:#000;">23</div>
<div style="left:0px;top:743px;width:25px;height:1px;background:#b0b0b0;"></div>
<div class="t" style="left:5.59px;top:727.5px;font-size:13.33px;color:#000;">24</div>
<div style="left:0px;top:760px;width:25px;height:1px;background:#b0b0b0;"></div>
<div class="t" style="left:5.59px;top:744.5px;font-size:13.33px;color:#000;">25</div>
<div style="left:0px;top:777px;width:25px;height:1px;background:#b0b0b0;"></div>
<div class="t" style="left:5.59px;top:761.5px;font-size:13.33px;color:#000;">26</div>
<div style="left:0px;top:794px;width:25px;height:1px;background:#b0b0b0;"></div>
<div class="t" style="left:5.59px;top:778.5px;font-size:13.33px;color:#000;">27</div>
<div style="left:0px;top:811px;width:25px;height:1px;background:#b0b0b0;"></div>
<div class="t" style="left:5.59px;top:795.5px;font-size:13.33px;color:#000;">28</div>
<div style="left:0px;top:828px;width:25px;height:1px;background:#b0b0b0;"></div>
<div class="t" style="left:5.59px;top:812.5px;font-size:13.33px;color:#000;">29</div>
<div style="left:0px;top:845px;width:25px;height:1px;background:#b0b0b0;"></div>
<div class="t" style="left:5.59px;top:829.5px;font-size:13.33px;color:#000;">30</div>
<div style="left:0px;top:862px;width:25px;height:1px;background:#b0b0b0;"></div>
<div class="t" style="left:5.59px;top:846.5px;font-size:13.33px;color:#000;">31</div>
<div style="left:0px;top:883px;width:25px;height:1px;background:#b0b0b0;"></div>
<div class="t" style="left:5.59px;top:867.5px;font-size:13.33px;color:#000;">32</div>
<div style="left:0px;top:904px;width:25px;height:1px;background:#b0b0b0;"></div>
<div class="t" style="left:5.59px;top:888.5px;font-size:13.33px;color:#000;">33</div>
<div style="left:0px;top:921px;width:25px;height:1px;background:#b0b0b0;"></div>
<div class="t" style="left:5.59px;top:905.5px;font-size:13.33px;color:#000;">34</div>
<div style="left:0px;top:937px;width:25px;height:1px;background:#b0b0b0;"></div>
<div class="t" style="left:5.59px;top:921.5px;font-size:13.33px;color:#000;">35</div>
<div style="left:0px;top:954px;width:25px;height:1px;background:#b0b0b0;"></div>
<div class="t" style="left:5.59px;top:938.5px;font-size:13.33px;color:#000;">36</div>
<div style="left:0px;top:971px;width:25px;height:1px;background:#b0b0b0;"></div>
<div class="t" style="left:5.59px;top:955.5px;font-size:13.33px;color:#000;">37</div>
<div style="left:0px;top:988px;width:25px;height:1px;background:#b0b0b0;"></div>
<div class="t" style="left:5.59px;top:972.5px;font-size:13.33px;color:#000;">38</div>
<div style="left:45px;top:313px;width:200px;height:22px;background:#50b47f;box-shadow:inset 0 0 0 1px #45ab74;"></div>
<div class="t" style="left:119.37px;top:317px;font-size:14.4px;letter-spacing:-0.258px;font-weight:bold;color:#fff;">Kitchen</div>
<div style="left:247px;top:317px;width:17px;height:17px;background:#f7f7f7;border:1px solid #a8a8a8;box-sizing:border-box;"></div>
<svg style="left:252px;top:324px" width="8" height="5"><path d="M.3 .3h7.400L4 4.300z" fill="#555"/></svg>
<div style="left:45px;top:371px;width:200px;height:21px;background:#50b47f;box-shadow:inset 0 0 0 1px #45ab74;"></div>
<div class="t" style="left:128.30px;top:375px;font-size:14.4px;letter-spacing:-0.300px;font-weight:bold;color:#fff;">Units</div>
<div style="left:247px;top:371px;width:80px;height:21px;background:#50b47f;box-shadow:inset 0 0 0 1px #45ab74;"></div>
<div class="t" style="left:275.60px;top:375px;font-size:14.4px;letter-spacing:-1.011px;font-weight:bold;color:#fff;">Jan</div>
<div style="left:329px;top:371px;width:80px;height:21px;background:#50b47f;box-shadow:inset 0 0 0 1px #45ab74;"></div>
<div class="t" style="left:356.82px;top:375px;font-size:14.4px;letter-spacing:-0.617px;font-weight:bold;color:#fff;">Feb</div>
<div style="left:411px;top:371px;width:80px;height:21px;background:#50b47f;box-shadow:inset 0 0 0 1px #45ab74;"></div>
<div class="t" style="left:437.54px;top:375px;font-size:14.4px;letter-spacing:0.654px;font-weight:bold;color:#fff;">Mar</div>
<div style="left:493px;top:371px;width:80px;height:21px;background:#50b47f;box-shadow:inset 0 0 0 1px #45ab74;"></div>
<div class="t" style="left:520.88px;top:375px;font-size:14.4px;letter-spacing:-0.277px;font-weight:bold;color:#fff;">Apr</div>
<div style="left:575px;top:371px;width:80px;height:21px;background:#50b47f;box-shadow:inset 0 0 0 1px #45ab74;"></div>
<div class="t" style="left:600.61px;top:375px;font-size:14.4px;letter-spacing:0.386px;font-weight:bold;color:#fff;">May</div>
<div style="left:657px;top:371px;width:80px;height:21px;background:#50b47f;box-shadow:inset 0 0 0 1px #45ab74;"></div>
<div class="t" style="left:685.24px;top:375px;font-size:14.4px;letter-spacing:-1.044px;font-weight:bold;color:#fff;">Jun</div>
<div style="left:739px;top:371px;width:80px;height:21px;background:#50b47f;box-shadow:inset 0 0 0 1px #45ab74;"></div>
<div class="t" style="left:769.59px;top:375px;font-size:14.4px;letter-spacing:-0.998px;font-weight:bold;color:#fff;">Jul</div>
<div style="left:821px;top:371px;width:80px;height:21px;background:#50b47f;box-shadow:inset 0 0 0 1px #45ab74;"></div>
<div class="t" style="left:847.71px;top:375px;font-size:14.4px;letter-spacing:-0.708px;font-weight:bold;color:#fff;">Aug</div>
<div style="left:903px;top:371px;width:80px;height:21px;background:#50b47f;box-shadow:inset 0 0 0 1px #45ab74;"></div>
<div class="t" style="left:930.53px;top:375px;font-size:14.4px;letter-spacing:-0.735px;font-weight:bold;color:#fff;">Sep</div>
<div style="left:985px;top:371px;width:80px;height:21px;background:#50b47f;box-shadow:inset 0 0 0 1px #45ab74;"></div>
<div class="t" style="left:1013.31px;top:375px;font-size:14.4px;letter-spacing:-0.314px;font-weight:bold;color:#fff;">Oct</div>
<div style="left:1067px;top:371px;width:80px;height:21px;background:#50b47f;box-shadow:inset 0 0 0 1px #45ab74;"></div>
<div class="t" style="left:1093.58px;top:375px;font-size:14.4px;letter-spacing:-0.180px;font-weight:bold;color:#fff;">Nov</div>
<div style="left:1149px;top:371px;width:80px;height:21px;background:#50b47f;box-shadow:inset 0 0 0 1px #45ab74;"></div>
<div class="t" style="left:1176.32px;top:375px;font-size:14.4px;letter-spacing:-0.527px;font-weight:bold;color:#fff;">Dec</div>
<div style="left:1231px;top:371px;width:70px;height:21px;background:#50b47f;box-shadow:inset 0 0 0 1px #45ab74;"></div>
<div class="t" style="left:1257.49px;top:375px;font-size:14.4px;letter-spacing:-1.372px;font-weight:bold;color:#fff;">FY</div>
<div style="left:1230px;top:393px;width:73px;height:19px;background:#d9d9d9;"></div>
<div style="left:45px;top:412px;width:1258px;height:1px;background-image:repeating-linear-gradient(90deg,#c8c8c8 0 1px,transparent 1px 2px);"></div>
<div class="t" style="left:47.30px;top:395.5px;font-size:11.7px;letter-spacing:0.066px;font-weight:bold;color:#000;">2018 Actual</div>
<div class="t" style="left:308.24px;top:395.5px;font-size:11.7px;letter-spacing:0.249px;color:#000;">34</div>
<div class="t" style="left:390.24px;top:395.5px;font-size:11.7px;letter-spacing:0.249px;color:#000;">28</div>
<div class="t" style="left:472.24px;top:395.5px;font-size:11.7px;letter-spacing:0.249px;color:#000;">44</div>
<div class="t" style="left:554.24px;top:395.5px;font-size:11.7px;letter-spacing:0.249px;color:#000;">44</div>
<div class="t" style="left:636.24px;top:395.5px;font-size:11.7px;letter-spacing:0.249px;color:#000;">42</div>
<div class="t" style="left:718.24px;top:395.5px;font-size:11.7px;letter-spacing:0.249px;color:#000;">44</div>
<div class="t" style="left:800.24px;top:395.5px;font-size:11.7px;letter-spacing:0.249px;color:#000;">40</div>
<div class="t" style="left:882.24px;top:395.5px;font-size:11.7px;letter-spacing:0.249px;color:#000;">56</div>
<div class="t" style="left:964.24px;top:395.5px;font-size:11.7px;letter-spacing:0.249px;color:#000;">50</div>
<div class="t" style="left:1046.24px;top:395.5px;font-size:11.7px;letter-spacing:0.249px;color:#000;">58</div>
<div class="t" style="left:1121.77px;top:395.5px;font-size:11.7px;letter-spacing:0.539px;color:#000;">110</div>
<div class="t" style="left:1210.24px;top:395.5px;font-size:11.7px;letter-spacing:0.249px;color:#000;">92</div>
<div class="t" style="left:1275.68px;top:395.5px;font-size:11.7px;letter-spacing:0.249px;color:#000;">642</div>
<div style="left:1230px;top:413px;width:73px;height:19px;background:#d9d9d9;"></div>
<div style="left:45px;top:432px;width:1258px;height:1px;background-image:repeating-linear-gradient(90deg,#c8c8c8 0 1px,transparent 1px 2px);"></div>
<div class="t" style="left:47.30px;top:415.5px;font-size:11.7px;letter-spacing:0.066px;font-weight:bold;color:#000;">2019 Actual</div>
<div class="t" style="left:301.48px;top:415.5px;font-size:11.7px;letter-spacing:0.249px;color:#000;">128</div>
<div class="t" style="left:390.24px;top:415.5px;font-size:11.7px;letter-spacing:0.249px;color:#000;">74</div>
<div class="t" style="left:465.48px;top:415.5px;font-size:11.7px;letter-spacing:0.249px;color:#000;">108</div>
<div class="t" style="left:554.24px;top:415.5px;font-size:11.7px;letter-spacing:0.249px;color:#000;">92</div>
<div class="t" style="left:629.48px;top:415.5px;font-size:11.7px;letter-spacing:0.249px;color:#000;">104</div>
<div class="t" style="left:711.48px;top:415.5px;font-size:11.7px;letter-spacing:0.249px;color:#000;">206</div>
<div class="t" style="left:793.48px;top:415.5px;font-size:11.7px;letter-spacing:0.249px;color:#000;">232</div>
<div class="t" style="left:875.48px;top:415.5px;font-size:11.7px;letter-spacing:0.249px;color:#000;">234</div>
<div class="t" style="left:957.48px;top:415.5px;font-size:11.7px;letter-spacing:0.249px;color:#000;">270</div>
<div class="t" style="left:1039.48px;top:415.5px;font-size:11.7px;letter-spacing:0.249px;color:#000;">320</div>
<div class="t" style="left:1121.48px;top:415.5px;font-size:11.7px;letter-spacing:0.249px;color:#000;">378</div>
<div class="t" style="left:1203.48px;top:415.5px;font-size:11.7px;letter-spacing:0.249px;color:#000;">426</div>
<div class="t" style="left:1265.56px;top:415.5px;font-size:11.7px;letter-spacing:0.214px;color:#000;">2,572</div>
<div style="left:44px;top:433px;width:1259px;height:19px;background:#8fcfac;"></div>
<div style="left:45px;top:452px;width:1258px;height:1px;background-image:repeating-linear-gradient(90deg,#c8c8c8 0 1px,transparent 1px 2px);"></div>
<div class="t" style="left:47.30px;top:435.5px;font-size:11.7px;letter-spacing:-0.031px;font-weight:bold;color:#000;">2020 Budget</div>
<div class="t" style="left:301.48px;top:435.5px;font-size:11.7px;letter-spacing:0.249px;font-weight:bold;color:#000;">497</div>
<div class="t" style="left:383.48px;top:435.5px;font-size:11.7px;letter-spacing:0.249px;font-weight:bold;color:#000;">524</div>
<div class="t" style="left:465.48px;top:435.5px;font-size:11.7px;letter-spacing:0.249px;font-weight:bold;color:#000;">558</div>
<div class="t" style="left:547.48px;top:435.5px;font-size:11.7px;letter-spacing:0.249px;font-weight:bold;color:#000;">574</div>
<div class="t" style="left:629.48px;top:435.5px;font-size:11.7px;letter-spacing:0.249px;font-weight:bold;color:#000;">616</div>
<div class="t" style="left:711.48px;top:435.5px;font-size:11.7px;letter-spacing:0.249px;font-weight:bold;color:#000;">653</div>
<div class="t" style="left:793.48px;top:435.5px;font-size:11.7px;letter-spacing:0.249px;font-weight:bold;color:#000;">739</div>
<div class="t" style="left:875.48px;top:435.5px;font-size:11.7px;letter-spacing:0.249px;font-weight:bold;color:#000;">787</div>
<div class="t" style="left:957.48px;top:435.5px;font-size:11.7px;letter-spacing:0.249px;font-weight:bold;color:#000;">842</div>
<div class="t" style="left:1039.48px;top:435.5px;font-size:11.7px;letter-spacing:0.249px;font-weight:bold;color:#000;">907</div>
<div class="t" style="left:1121.48px;top:435.5px;font-size:11.7px;letter-spacing:0.249px;font-weight:bold;color:#000;">973</div>
<div class="t" style="left:1193.28px;top:435.5px;font-size:11.7px;letter-spacing:0.236px;font-weight:bold;color:#000;">1,045</div>
<div class="t" style="left:1265.48px;top:435.5px;font-size:11.7px;letter-spacing:0.236px;font-weight:bold;color:#000;">8,715</div>
<div style="left:1230px;top:453px;width:73px;height:19px;background:#d9d9d9;"></div>
<div style="left:45px;top:472px;width:1258px;height:1px;background-image:repeating-linear-gradient(90deg,#c8c8c8 0 1px,transparent 1px 2px);"></div>
<div class="t" style="left:47.30px;top:455.5px;font-size:11.7px;letter-spacing:0.066px;font-weight:bold;color:#000;">2020 Actual</div>
<div class="t" style="left:301.48px;top:455.5px;font-size:11.7px;letter-spacing:0.249px;font-weight:bold;color:#000;">336</div>
<div class="t" style="left:383.48px;top:455.5px;font-size:11.7px;letter-spacing:0.249px;font-weight:bold;color:#000;">356</div>
<div class="t" style="left:465.48px;top:455.5px;font-size:11.7px;letter-spacing:0.249px;font-weight:bold;color:#000;">498</div>
<div class="t" style="left:547.48px;top:455.5px;font-size:11.7px;letter-spacing:0.249px;font-weight:bold;color:#000;">316</div>
<div class="t" style="left:629.48px;top:455.5px;font-size:11.7px;letter-spacing:0.249px;font-weight:bold;color:#000;">384</div>
<div class="t" style="left:711.48px;top:455.5px;font-size:11.7px;letter-spacing:0.249px;font-weight:bold;color:#000;">404</div>
<div class="t" style="left:793.48px;top:455.5px;font-size:11.7px;letter-spacing:0.249px;font-weight:bold;color:#000;">490</div>
<div class="t" style="left:878.05px;top:455.5px;font-size:11.7px;font-weight:bold;color:#000;">-</div>
<div class="t" style="left:960.05px;top:455.5px;font-size:11.7px;font-weight:bold;color:#000;">-</div>
<div class="t" style="left:1042.05px;top:455.5px;font-size:11.7px;font-weight:bold;color:#000;">-</div>
<div class="t" style="left:1124.05px;top:455.5px;font-size:11.7px;font-weight:bold;color:#000;">-</div>
<div class="t" style="left:1206.05px;top:455.5px;font-size:11.7px;font-weight:bold;color:#000;">-</div>
<div class="t" style="left:1265.48px;top:455.5px;font-size:11.7px;letter-spacing:0.236px;font-weight:bold;color:#000;">2,784</div>
<div style="left:1230px;top:473px;width:73px;height:16px;background:#d9d9d9;"></div>
<div style="left:45px;top:489px;width:1258px;height:1px;background-image:repeating-linear-gradient(90deg,#c8c8c8 0 1px,transparent 1px 2px);"></div>
<div class="t" style="left:47.30px;top:473.5px;font-size:11.7px;letter-spacing:-0.310px;font-weight:bold;color:#000;">Forecast</div>
<div class="t" style="left:301.48px;top:473.5px;font-size:11.7px;letter-spacing:0.249px;font-weight:bold;color:#000;">336</div>
<div class="t" style="left:383.48px;top:473.5px;font-size:11.7px;letter-spacing:0.249px;font-weight:bold;color:#000;">356</div>
<div class="t" style="left:465.48px;top:473.5px;font-size:11.7px;letter-spacing:0.249px;font-weight:bold;color:#000;">498</div>
<div class="t" style="left:547.48px;top:473.5px;font-size:11.7px;letter-spacing:0.249px;font-weight:bold;color:#000;">316</div>
<div class="t" style="left:629.48px;top:473.5px;font-size:11.7px;letter-spacing:0.249px;font-weight:bold;color:#000;">384</div>
<div class="t" style="left:711.48px;top:473.5px;font-size:11.7px;letter-spacing:0.249px;font-weight:bold;color:#000;">404</div>
<div class="t" style="left:793.48px;top:473.5px;font-size:11.7px;letter-spacing:0.249px;font-weight:bold;color:#000;">490</div>
<div class="t" style="left:875.48px;top:473.5px;font-size:11.7px;letter-spacing:0.249px;font-weight:bold;color:#000;">721</div>
<div class="t" style="left:957.48px;top:473.5px;font-size:11.7px;letter-spacing:0.249px;font-weight:bold;color:#000;">777</div>
<div class="t" style="left:1039.48px;top:473.5px;font-size:11.7px;letter-spacing:0.249px;font-weight:bold;color:#000;">842</div>
<div class="t" style="left:1121.48px;top:473.5px;font-size:11.7px;letter-spacing:0.249px;font-weight:bold;color:#000;">913</div>
<div class="t" style="left:1203.48px;top:473.5px;font-size:11.7px;letter-spacing:0.249px;font-weight:bold;color:#000;">988</div>
<div class="t" style="left:1265.48px;top:473.5px;font-size:11.7px;letter-spacing:0.236px;font-weight:bold;color:#000;">7,026</div>
<div style="left:45px;top:392px;width:1258px;height:1px;background-image:repeating-linear-gradient(90deg,#c8c8c8 0 1px,transparent 1px 2px);"></div>
<div style="left:45px;top:510px;width:200px;height:21px;background:#50b47f;box-shadow:inset 0 0 0 1px #45ab74;"></div>
<div class="t" style="left:99.98px;top:514px;font-size:14.4px;letter-spacing:-0.449px;font-weight:bold;color:#fff;">Sales in kUSD</div>
<div style="left:247px;top:510px;width:80px;height:21px;background:#50b47f;box-shadow:inset 0 0 0 1px #45ab74;"></div>
<div class="t" style="left:275.60px;top:514px;font-size:14.4px;letter-spacing:-1.011px;font-weight:bold;color:#fff;">Jan</div>
<div style="left:329px;top:510px;width:80px;height:21px;background:#50b47f;box-shadow:inset 0 0 0 1px #45ab74;"></div>
<div class="t" style="left:356.82px;top:514px;font-size:14.4px;letter-spacing:-0.617px;font-weight:bold;color:#fff;">Feb</div>
<div style="left:411px;top:510px;width:80px;height:21px;background:#50b47f;box-shadow:inset 0 0 0 1px #45ab74;"></div>
<div class="t" style="left:437.54px;top:514px;font-size:14.4px;letter-spacing:0.654px;font-weight:bold;color:#fff;">Mar</div>
<div style="left:493px;top:510px;width:80px;height:21px;background:#50b47f;box-shadow:inset 0 0 0 1px #45ab74;"></div>
<div class="t" style="left:520.88px;top:514px;font-size:14.4px;letter-spacing:-0.277px;font-weight:bold;color:#fff;">Apr</div>
<div style="left:575px;top:510px;width:80px;height:21px;background:#50b47f;box-shadow:inset 0 0 0 1px #45ab74;"></div>
<div class="t" style="left:600.61px;top:514px;font-size:14.4px;letter-spacing:0.386px;font-weight:bold;color:#fff;">May</div>
<div style="left:657px;top:510px;width:80px;height:21px;background:#50b47f;box-shadow:inset 0 0 0 1px #45ab74;"></div>
<div class="t" style="left:685.24px;top:514px;font-size:14.4px;letter-spacing:-1.044px;font-weight:bold;color:#fff;">Jun</div>
<div style="left:739px;top:510px;width:80px;height:21px;background:#50b47f;box-shadow:inset 0 0 0 1px #45ab74;"></div>
<div class="t" style="left:769.59px;top:514px;font-size:14.4px;letter-spacing:-0.998px;font-weight:bold;color:#fff;">Jul</div>
<div style="left:821px;top:510px;width:80px;height:21px;background:#50b47f;box-shadow:inset 0 0 0 1px #45ab74;"></div>
<div class="t" style="left:847.71px;top:514px;font-size:14.4px;letter-spacing:-0.708px;font-weight:bold;color:#fff;">Aug</div>
<div style="left:903px;top:510px;width:80px;height:21px;background:#50b47f;box-shadow:inset 0 0 0 1px #45ab74;"></div>
<div class="t" style="left:930.53px;top:514px;font-size:14.4px;letter-spacing:-0.735px;font-weight:bold;color:#fff;">Sep</div>
<div style="left:985px;top:510px;width:80px;height:21px;background:#50b47f;box-shadow:inset 0 0 0 1px #45ab74;"></div>
<div class="t" style="left:1013.31px;top:514px;font-size:14.4px;letter-spacing:-0.314px;font-weight:bold;color:#fff;">Oct</div>
<div style="left:1067px;top:510px;width:80px;height:21px;background:#50b47f;box-shadow:inset 0 0 0 1px #45ab74;"></div>
<div class="t" style="left:1093.58px;top:514px;font-size:14.4px;letter-spacing:-0.180px;font-weight:bold;color:#fff;">Nov</div>
<div style="left:1149px;top:510px;width:80px;height:21px;background:#50b47f;box-shadow:inset 0 0 0 1px #45ab74;"></div>
<div class="t" style="left:1176.32px;top:514px;font-size:14.4px;letter-spacing:-0.527px;font-weight:bold;color:#fff;">Dec</div>
<div style="left:1231px;top:510px;width:70px;height:21px;background:#50b47f;box-shadow:inset 0 0 0 1px #45ab74;"></div>
<div class="t" style="left:1257.49px;top:514px;font-size:14.4px;letter-spacing:-1.372px;font-weight:bold;color:#fff;">FY</div>
<div style="left:1230px;top:532px;width:73px;height:17px;background:#d9d9d9;"></div>
<div style="left:45px;top:549px;width:1258px;height:1px;background-image:repeating-linear-gradient(90deg,#c8c8c8 0 1px,transparent 1px 2px);"></div>
<div class="t" style="left:47.30px;top:532.5px;font-size:11.7px;letter-spacing:0.066px;font-weight:bold;color:#000;">2018 Actual</div>
<div class="t" style="left:308.24px;top:532.5px;font-size:11.7px;letter-spacing:0.249px;color:#000;">44</div>
<div class="t" style="left:390.24px;top:532.5px;font-size:11.7px;letter-spacing:0.249px;color:#000;">53</div>
<div class="t" style="left:472.24px;top:532.5px;font-size:11.7px;letter-spacing:0.249px;color:#000;">68</div>
<div class="t" style="left:554.24px;top:532.5px;font-size:11.7px;letter-spacing:0.249px;color:#000;">51</div>
<div class="t" style="left:636.24px;top:532.5px;font-size:11.7px;letter-spacing:0.249px;color:#000;">33</div>
<div class="t" style="left:718.24px;top:532.5px;font-size:11.7px;letter-spacing:0.249px;color:#000;">46</div>
<div class="t" style="left:800.24px;top:532.5px;font-size:11.7px;letter-spacing:0.249px;color:#000;">36</div>
<div class="t" style="left:882.24px;top:532.5px;font-size:11.7px;letter-spacing:0.249px;color:#000;">55</div>
<div class="t" style="left:964.24px;top:532.5px;font-size:11.7px;letter-spacing:0.249px;color:#000;">50</div>
<div class="t" style="left:1046.24px;top:532.5px;font-size:11.7px;letter-spacing:0.249px;color:#000;">57</div>
<div class="t" style="left:1124.10px;top:532.5px;font-size:11.7px;letter-spacing:0.197px;color:#000;">(27)</div>
<div class="t" style="left:1203.48px;top:532.5px;font-size:11.7px;letter-spacing:0.249px;color:#000;">225</div>
<div class="t" style="left:1275.68px;top:532.5px;font-size:11.7px;letter-spacing:0.249px;color:#000;">691</div>
<div style="left:1230px;top:550px;width:73px;height:17px;background:#d9d9d9;"></div>
<div style="left:45px;top:567px;width:1258px;height:1px;background-image:repeating-linear-gradient(90deg,#c8c8c8 0 1px,transparent 1px 2px);"></div>
<div class="t" style="left:47.30px;top:551.5px;font-size:11.7px;letter-spacing:0.066px;font-weight:bold;color:#000;">2019 Actual</div>
<div class="t" style="left:301.48px;top:551.5px;font-size:11.7px;letter-spacing:0.249px;color:#000;">128</div>
<div class="t" style="left:390.24px;top:551.5px;font-size:11.7px;letter-spacing:0.249px;color:#000;">73</div>
<div class="t" style="left:465.48px;top:551.5px;font-size:11.7px;letter-spacing:0.249px;color:#000;">103</div>
<div class="t" style="left:554.24px;top:551.5px;font-size:11.7px;letter-spacing:0.249px;color:#000;">81</div>
<div class="t" style="left:636.24px;top:551.5px;font-size:11.7px;letter-spacing:0.249px;color:#000;">99</div>
<div class="t" style="left:711.48px;top:551.5px;font-size:11.7px;letter-spacing:0.249px;color:#000;">128</div>
<div class="t" style="left:793.48px;top:551.5px;font-size:11.7px;letter-spacing:0.249px;color:#000;">142</div>
<div class="t" style="left:875.48px;top:551.5px;font-size:11.7px;letter-spacing:0.249px;color:#000;">172</div>
<div class="t" style="left:957.48px;top:551.5px;font-size:11.7px;letter-spacing:0.249px;color:#000;">172</div>
<div class="t" style="left:1039.48px;top:551.5px;font-size:11.7px;letter-spacing:0.249px;color:#000;">213</div>
<div class="t" style="left:1121.48px;top:551.5px;font-size:11.7px;letter-spacing:0.249px;color:#000;">259</div>
<div class="t" style="left:1203.48px;top:551.5px;font-size:11.7px;letter-spacing:0.249px;color:#000;">223</div>
<div class="t" style="left:1265.56px;top:551.5px;font-size:11.7px;letter-spacing:0.214px;color:#000;">1,792</div>
<div style="left:44px;top:568px;width:1259px;height:17px;background:#8fcfac;"></div>
<div style="left:45px;top:585px;width:1258px;height:1px;background-image:repeating-linear-gradient(90deg,#c8c8c8 0 1px,transparent 1px 2px);"></div>
<div class="t" style="left:47.30px;top:569.5px;font-size:11.7px;letter-spacing:-0.031px;font-weight:bold;color:#000;">2020 Budget</div>
<div class="t" style="left:301.48px;top:569.5px;font-size:11.7px;letter-spacing:0.249px;font-weight:bold;color:#000;">267</div>
<div class="t" style="left:383.48px;top:569.5px;font-size:11.7px;letter-spacing:0.249px;font-weight:bold;color:#000;">284</div>
<div class="t" style="left:465.48px;top:569.5px;font-size:11.7px;letter-spacing:0.249px;font-weight:bold;color:#000;">302</div>
<div class="t" style="left:547.48px;top:569.5px;font-size:11.7px;letter-spacing:0.249px;font-weight:bold;color:#000;">312</div>
<div class="t" style="left:629.48px;top:569.5px;font-size:11.7px;letter-spacing:0.249px;font-weight:bold;color:#000;">338</div>
<div class="t" style="left:711.48px;top:569.5px;font-size:11.7px;letter-spacing:0.249px;font-weight:bold;color:#000;">362</div>
<div class="t" style="left:793.48px;top:569.5px;font-size:11.7px;letter-spacing:0.249px;font-weight:bold;color:#000;">418</div>
<div class="t" style="left:875.48px;top:569.5px;font-size:11.7px;letter-spacing:0.249px;font-weight:bold;color:#000;">449</div>
<div class="t" style="left:957.48px;top:569.5px;font-size:11.7px;letter-spacing:0.249px;font-weight:bold;color:#000;">484</div>
<div class="t" style="left:1039.48px;top:569.5px;font-size:11.7px;letter-spacing:0.249px;font-weight:bold;color:#000;">524</div>
<div class="t" style="left:1121.48px;top:569.5px;font-size:11.7px;letter-spacing:0.249px;font-weight:bold;color:#000;">568</div>
<div class="t" style="left:1203.48px;top:569.5px;font-size:11.7px;letter-spacing:0.249px;font-weight:bold;color:#000;">615</div>
<div class="t" style="left:1265.48px;top:569.5px;font-size:11.7px;letter-spacing:0.236px;font-weight:bold;color:#000;">4,921</div>
<div style="left:1230px;top:586px;width:73px;height:17px;background:#d9d9d9;"></div>
<div style="left:45px;top:603px;width:1258px;height:1px;background-image:repeating-linear-gradient(90deg,#c8c8c8 0 1px,transparent 1px 2px);"></div>
<div class="t" style="left:47.30px;top:587.5px;font-size:11.7px;letter-spacing:0.066px;font-weight:bold;color:#000;">2020 Actual</div>
<div class="t" style="left:301.48px;top:587.5px;font-size:11.7px;letter-spacing:0.249px;font-weight:bold;color:#000;">216</div>
<div class="t" style="left:383.48px;top:587.5px;font-size:11.7px;letter-spacing:0.249px;font-weight:bold;color:#000;">214</div>
<div class="t" style="left:465.48px;top:587.5px;font-size:11.7px;letter-spacing:0.249px;font-weight:bold;color:#000;">307</div>
<div class="t" style="left:547.48px;top:587.5px;font-size:11.7px;letter-spacing:0.249px;font-weight:bold;color:#000;">206</div>
<div class="t" style="left:629.48px;top:587.5px;font-size:11.7px;letter-spacing:0.249px;font-weight:bold;color:#000;">244</div>
<div class="t" style="left:711.48px;top:587.5px;font-size:11.7px;letter-spacing:0.249px;font-weight:bold;color:#000;">250</div>
<div class="t" style="left:793.48px;top:587.5px;font-size:11.7px;letter-spacing:0.249px;font-weight:bold;color:#000;">295</div>
<div class="t" style="left:878.05px;top:587.5px;font-size:11.7px;font-weight:bold;color:#000;">-</div>
<div class="t" style="left:960.05px;top:587.5px;font-size:11.7px;font-weight:bold;color:#000;">-</div>
<div class="t" style="left:1042.05px;top:587.5px;font-size:11.7px;font-weight:bold;color:#000;">-</div>
<div class="t" style="left:1124.05px;top:587.5px;font-size:11.7px;font-weight:bold;color:#000;">-</div>
<div class="t" style="left:1206.05px;top:587.5px;font-size:11.7px;font-weight:bold;color:#000;">-</div>
<div class="t" style="left:1265.48px;top:587.5px;font-size:11.7px;letter-spacing:0.236px;font-weight:bold;color:#000;">1,732</div>
<div style="left:1230px;top:604px;width:73px;height:16px;background:#d9d9d9;"></div>
<div style="left:45px;top:620px;width:1258px;height:1px;background-image:repeating-linear-gradient(90deg,#c8c8c8 0 1px,transparent 1px 2px);"></div>
<div class="t" style="left:47.30px;top:604.5px;font-size:11.7px;letter-spacing:-0.310px;font-weight:bold;color:#000;">Forecast</div>
<div class="t" style="left:301.48px;top:604.5px;font-size:11.7px;letter-spacing:0.249px;font-weight:bold;color:#000;">216</div>
<div class="t" style="left:383.48px;top:604.5px;font-size:11.7px;letter-spacing:0.249px;font-weight:bold;color:#000;">214</div>
<div class="t" style="left:465.48px;top:604.5px;font-size:11.7px;letter-spacing:0.249px;font-weight:bold;color:#000;">307</div>
<div class="t" style="left:547.48px;top:604.5px;font-size:11.7px;letter-spacing:0.249px;font-weight:bold;color:#000;">206</div>
<div class="t" style="left:629.48px;top:604.5px;font-size:11.7px;letter-spacing:0.249px;font-weight:bold;color:#000;">244</div>
<div class="t" style="left:711.48px;top:604.5px;font-size:11.7px;letter-spacing:0.249px;font-weight:bold;color:#000;">250</div>
<div class="t" style="left:793.48px;top:604.5px;font-size:11.7px;letter-spacing:0.249px;font-weight:bold;color:#000;">295</div>
<div class="t" style="left:875.48px;top:604.5px;font-size:11.7px;letter-spacing:0.249px;font-weight:bold;color:#000;">449</div>
<div class="t" style="left:957.48px;top:604.5px;font-size:11.7px;letter-spacing:0.249px;font-weight:bold;color:#000;">484</div>
<div class="t" style="left:1039.48px;top:604.5px;font-size:11.7px;letter-spacing:0.249px;font-weight:bold;color:#000;">524</div>
<div class="t" style="left:1121.48px;top:604.5px;font-size:11.7px;letter-spacing:0.249px;font-weight:bold;color:#000;">568</div>
<div class="t" style="left:1203.48px;top:604.5px;font-size:11.7px;letter-spacing:0.249px;font-weight:bold;color:#000;">615</div>
<div class="t" style="left:1265.48px;top:604.5px;font-size:11.7px;letter-spacing:0.236px;font-weight:bold;color:#000;">4,371</div>
<div style="left:45px;top:531px;width:1258px;height:1px;background-image:repeating-linear-gradient(90deg,#c8c8c8 0 1px,transparent 1px 2px);"></div>
<div style="left:45px;top:637px;width:200px;height:21px;background:#50b47f;box-shadow:inset 0 0 0 1px #45ab74;"></div>
<div class="t" style="left:70.30px;top:641px;font-size:14.4px;letter-spacing:-0.197px;font-weight:bold;color:#fff;">Average Price in kUSD</div>
<div style="left:247px;top:637px;width:80px;height:21px;background:#50b47f;box-shadow:inset 0 0 0 1px #45ab74;"></div>
<div class="t" style="left:275.60px;top:641px;font-size:14.4px;letter-spacing:-1.011px;font-weight:bold;color:#fff;">Jan</div>
<div style="left:329px;top:637px;width:80px;height:21px;background:#50b47f;box-shadow:inset 0 0 0 1px #45ab74;"></div>
<div class="t" style="left:356.82px;top:641px;font-size:14.4px;letter-spacing:-0.617px;font-weight:bold;color:#fff;">Feb</div>
<div style="left:411px;top:637px;width:80px;height:21px;background:#50b47f;box-shadow:inset 0 0 0 1px #45ab74;"></div>
<div class="t" style="left:437.54px;top:641px;font-size:14.4px;letter-spacing:0.654px;font-weight:bold;color:#fff;">Mar</div>
<div style="left:493px;top:637px;width:80px;height:21px;background:#50b47f;box-shadow:inset 0 0 0 1px #45ab74;"></div>
<div class="t" style="left:520.88px;top:641px;font-size:14.4px;letter-spacing:-0.277px;font-weight:bold;color:#fff;">Apr</div>
<div style="left:575px;top:637px;width:80px;height:21px;background:#50b47f;box-shadow:inset 0 0 0 1px #45ab74;"></div>
<div class="t" style="left:600.61px;top:641px;font-size:14.4px;letter-spacing:0.386px;font-weight:bold;color:#fff;">May</div>
<div style="left:657px;top:637px;width:80px;height:21px;background:#50b47f;box-shadow:inset 0 0 0 1px #45ab74;"></div>
<div class="t" style="left:685.24px;top:641px;font-size:14.4px;letter-spacing:-1.044px;font-weight:bold;color:#fff;">Jun</div>
<div style="left:739px;top:637px;width:80px;height:21px;background:#50b47f;box-shadow:inset 0 0 0 1px #45ab74;"></div>
<div class="t" style="left:769.59px;top:641px;font-size:14.4px;letter-spacing:-0.998px;font-weight:bold;color:#fff;">Jul</div>
<div style="left:821px;top:637px;width:80px;height:21px;background:#50b47f;box-shadow:inset 0 0 0 1px #45ab74;"></div>
<div class="t" style="left:847.71px;top:641px;font-size:14.4px;letter-spacing:-0.708px;font-weight:bold;color:#fff;">Aug</div>
<div style="left:903px;top:637px;width:80px;height:21px;background:#50b47f;box-shadow:inset 0 0 0 1px #45ab74;"></div>
<div class="t" style="left:930.53px;top:641px;font-size:14.4px;letter-spacing:-0.735px;font-weight:bold;color:#fff;">Sep</div>
<div style="left:985px;top:637px;width:80px;height:21px;background:#50b47f;box-shadow:inset 0 0 0 1px #45ab74;"></div>
<div class="t" style="left:1013.31px;top:641px;font-size:14.4px;letter-spacing:-0.314px;font-weight:bold;color:#fff;">Oct</div>
<div style="left:1067px;top:637px;width:80px;height:21px;background:#50b47f;box-shadow:inset 0 0 0 1px #45ab74;"></div>
<div class="t" style="left:1093.58px;top:641px;font-size:14.4px;letter-spacing:-0.180px;font-weight:bold;color:#fff;">Nov</div>
<div style="left:1149px;top:637px;width:80px;height:21px;background:#50b47f;box-shadow:inset 0 0 0 1px #45ab74;"></div>
<div class="t" style="left:1176.32px;top:641px;font-size:14.4px;letter-spacing:-0.527px;font-weight:bold;color:#fff;">Dec</div>
<div style="left:1231px;top:637px;width:70px;height:21px;background:#50b47f;box-shadow:inset 0 0 0 1px #45ab74;"></div>
<div class="t" style="left:1257.49px;top:641px;font-size:14.4px;letter-spacing:-1.372px;font-weight:bold;color:#fff;">FY</div>
<div style="left:1230px;top:659px;width:73px;height:16px;background:#d9d9d9;"></div>
<div style="left:45px;top:675px;width:1258px;height:1px;background-image:repeating-linear-gradient(90deg,#c8c8c8 0 1px,transparent 1px 2px);"></div>
<div class="t" style="left:47.30px;top:659.5px;font-size:11.7px;letter-spacing:0.066px;font-weight:bold;color:#000;">2018 Actual</div>
<div class="t" style="left:304.83px;top:659.5px;font-size:11.7px;letter-spacing:0.204px;color:#000;">1.3</div>
<div class="t" style="left:386.83px;top:659.5px;font-size:11.7px;letter-spacing:0.204px;color:#000;">1.9</div>
<div class="t" style="left:468.83px;top:659.5px;font-size:11.7px;letter-spacing:0.204px;color:#000;">1.5</div>
<div class="t" style="left:550.83px;top:659.5px;font-size:11.7px;letter-spacing:0.204px;color:#000;">1.2</div>
<div class="t" style="left:632.83px;top:659.5px;font-size:11.7px;letter-spacing:0.204px;color:#000;">0.8</div>
<div class="t" style="left:714.83px;top:659.5px;font-size:11.7px;letter-spacing:0.204px;color:#000;">1.0</div>
<div class="t" style="left:796.83px;top:659.5px;font-size:11.7px;letter-spacing:0.204px;color:#000;">0.9</div>
<div class="t" style="left:878.83px;top:659.5px;font-size:11.7px;letter-spacing:0.204px;color:#000;">1.0</div>
<div class="t" style="left:960.83px;top:659.5px;font-size:11.7px;letter-spacing:0.204px;color:#000;">1.0</div>
<div class="t" style="left:1042.83px;top:659.5px;font-size:11.7px;letter-spacing:0.204px;color:#000;">1.0</div>
<div class="t" style="left:1120.72px;top:659.5px;font-size:11.7px;letter-spacing:0.181px;color:#000;">(0.2)</div>
<div class="t" style="left:1206.83px;top:659.5px;font-size:11.7px;letter-spacing:0.204px;color:#000;">2.4</div>
<div class="t" style="left:1279.03px;top:659.5px;font-size:11.7px;letter-spacing:0.204px;color:#000;">1.1</div>
<div style="left:1230px;top:676px;width:73px;height:16px;background:#d9d9d9;"></div>
<div style="left:45px;top:692px;width:1258px;height:1px;background-image:repeating-linear-gradient(90deg,#c8c8c8 0 1px,transparent 1px 2px);"></div>
<div class="t" style="left:47.30px;top:676.5px;font-size:11.7px;letter-spacing:0.066px;font-weight:bold;color:#000;">2019 Actual</div>
<div class="t" style="left:304.83px;top:676.5px;font-size:11.7px;letter-spacing:0.204px;color:#000;">1.0</div>
<div class="t" style="left:386.83px;top:676.5px;font-size:11.7px;letter-spacing:0.204px;color:#000;">1.0</div>
<div class="t" style="left:468.83px;top:676.5px;font-size:11.7px;letter-spacing:0.204px;color:#000;">1.0</div>
<div class="t" style="left:550.83px;top:676.5px;font-size:11.7px;letter-spacing:0.204px;color:#000;">0.9</div>
<div class="t" style="left:632.83px;top:676.5px;font-size:11.7px;letter-spacing:0.204px;color:#000;">1.0</div>
<div class="t" style="left:714.83px;top:676.5px;font-size:11.7px;letter-spacing:0.204px;color:#000;">0.6</div>
<div class="t" style="left:796.83px;top:676.5px;font-size:11.7px;letter-spacing:0.204px;color:#000;">0.6</div>
<div class="t" style="left:878.83px;top:676.5px;font-size:11.7px;letter-spacing:0.204px;color:#000;">0.7</div>
<div class="t" style="left:960.83px;top:676.5px;font-size:11.7px;letter-spacing:0.204px;color:#000;">0.6</div>
<div class="t" style="left:1042.83px;top:676.5px;font-size:11.7px;letter-spacing:0.204px;color:#000;">0.7</div>
<div class="t" style="left:1124.83px;top:676.5px;font-size:11.7px;letter-spacing:0.204px;color:#000;">0.7</div>
<div class="t" style="left:1206.83px;top:676.5px;font-size:11.7px;letter-spacing:0.204px;color:#000;">0.5</div>
<div class="t" style="left:1279.03px;top:676.5px;font-size:11.7px;letter-spacing:0.204px;color:#000;">0.7</div>
<div style="left:44px;top:693px;width:1259px;height:16px;background:#8fcfac;"></div>
<div style="left:45px;top:709px;width:1258px;height:1px;background-image:repeating-linear-gradient(90deg,#c8c8c8 0 1px,transparent 1px 2px);"></div>
<div class="t" style="left:47.30px;top:693.5px;font-size:11.7px;letter-spacing:-0.031px;font-weight:bold;color:#000;">2020 Budget</div>
<div class="t" style="left:304.70px;top:693.5px;font-size:11.7px;letter-spacing:0.269px;font-weight:bold;color:#000;">0.5</div>
<div class="t" style="left:386.70px;top:693.5px;font-size:11.7px;letter-spacing:0.269px;font-weight:bold;color:#000;">0.5</div>
<div class="t" style="left:468.70px;top:693.5px;font-size:11.7px;letter-spacing:0.269px;font-weight:bold;color:#000;">0.5</div>
<div class="t" style="left:550.70px;top:693.5px;font-size:11.7px;letter-spacing:0.269px;font-weight:bold;color:#000;">0.5</div>
<div class="t" style="left:632.70px;top:693.5px;font-size:11.7px;letter-spacing:0.269px;font-weight:bold;color:#000;">0.5</div>
<div class="t" style="left:714.70px;top:693.5px;font-size:11.7px;letter-spacing:0.269px;font-weight:bold;color:#000;">0.6</div>
<div class="t" style="left:796.70px;top:693.5px;font-size:11.7px;letter-spacing:0.269px;font-weight:bold;color:#000;">0.6</div>
<div class="t" style="left:878.70px;top:693.5px;font-size:11.7px;letter-spacing:0.269px;font-weight:bold;color:#000;">0.6</div>
<div class="t" style="left:960.70px;top:693.5px;font-size:11.7px;letter-spacing:0.269px;font-weight:bold;color:#000;">0.6</div>
<div class="t" style="left:1042.70px;top:693.5px;font-size:11.7px;letter-spacing:0.269px;font-weight:bold;color:#000;">0.6</div>
<div class="t" style="left:1124.70px;top:693.5px;font-size:11.7px;letter-spacing:0.269px;font-weight:bold;color:#000;">0.6</div>
<div class="t" style="left:1206.70px;top:693.5px;font-size:11.7px;letter-spacing:0.269px;font-weight:bold;color:#000;">0.6</div>
<div class="t" style="left:1278.90px;top:693.5px;font-size:11.7px;letter-spacing:0.269px;font-weight:bold;color:#000;">0.6</div>
<div style="left:1230px;top:710px;width:73px;height:16px;background:#d9d9d9;"></div>
<div style="left:45px;top:726px;width:1258px;height:1px;background-image:repeating-linear-gradient(90deg,#c8c8c8 0 1px,transparent 1px 2px);"></div>
<div class="t" style="left:47.30px;top:710.5px;font-size:11.7px;letter-spacing:0.066px;font-weight:bold;color:#000;">2020 Actual</div>
<div class="t" style="left:304.70px;top:710.5px;font-size:11.7px;letter-spacing:0.269px;font-weight:bold;color:#000;">0.6</div>
<div class="t" style="left:386.70px;top:710.5px;font-size:11.7px;letter-spacing:0.269px;font-weight:bold;color:#000;">0.6</div>
<div class="t" style="left:468.70px;top:710.5px;font-size:11.7px;letter-spacing:0.269px;font-weight:bold;color:#000;">0.6</div>
<div class="t" style="left:550.70px;top:710.5px;font-size:11.7px;letter-spacing:0.269px;font-weight:bold;color:#000;">0.7</div>
<div class="t" style="left:632.70px;top:710.5px;font-size:11.7px;letter-spacing:0.269px;font-weight:bold;color:#000;">0.6</div>
<div class="t" style="left:714.70px;top:710.5px;font-size:11.7px;letter-spacing:0.269px;font-weight:bold;color:#000;">0.6</div>
<div class="t" style="left:796.70px;top:710.5px;font-size:11.7px;letter-spacing:0.269px;font-weight:bold;color:#000;">0.6</div>
<div class="t" style="left:1278.90px;top:710.5px;font-size:11.7px;letter-spacing:0.269px;font-weight:bold;color:#000;">0.6</div>
<div style="left:1230px;top:727px;width:73px;height:16px;background:#d9d9d9;"></div>
<div style="left:45px;top:743px;width:1258px;height:1px;background-image:repeating-linear-gradient(90deg,#c8c8c8 0 1px,transparent 1px 2px);"></div>
<div class="t" style="left:47.30px;top:727.5px;font-size:11.7px;letter-spacing:-0.310px;font-weight:bold;color:#000;">Forecast</div>
<div class="t" style="left:304.70px;top:727.5px;font-size:11.7px;letter-spacing:0.269px;font-weight:bold;color:#000;">0.6</div>
<div class="t" style="left:386.70px;top:727.5px;font-size:11.7px;letter-spacing:0.269px;font-weight:bold;color:#000;">0.6</div>
<div class="t" style="left:468.70px;top:727.5px;font-size:11.7px;letter-spacing:0.269px;font-weight:bold;color:#000;">0.6</div>
<div class="t" style="left:550.70px;top:727.5px;font-size:11.7px;letter-spacing:0.269px;font-weight:bold;color:#000;">0.7</div>
<div class="t" style="left:632.70px;top:727.5px;font-size:11.7px;letter-spacing:0.269px;font-weight:bold;color:#000;">0.6</div>
<div class="t" style="left:714.70px;top:727.5px;font-size:11.7px;letter-spacing:0.269px;font-weight:bold;color:#000;">0.6</div>
<div class="t" style="left:796.70px;top:727.5px;font-size:11.7px;letter-spacing:0.269px;font-weight:bold;color:#000;">0.6</div>
<div class="t" style="left:878.70px;top:727.5px;font-size:11.7px;letter-spacing:0.269px;font-weight:bold;color:#000;">0.6</div>
<div class="t" style="left:960.70px;top:727.5px;font-size:11.7px;letter-spacing:0.269px;font-weight:bold;color:#000;">0.6</div>
<div class="t" style="left:1042.70px;top:727.5px;font-size:11.7px;letter-spacing:0.269px;font-weight:bold;color:#000;">0.6</div>
<div class="t" style="left:1124.70px;top:727.5px;font-size:11.7px;letter-spacing:0.269px;font-weight:bold;color:#000;">0.6</div>
<div class="t" style="left:1206.70px;top:727.5px;font-size:11.7px;letter-spacing:0.269px;font-weight:bold;color:#000;">0.6</div>
<div class="t" style="left:1278.90px;top:727.5px;font-size:11.7px;letter-spacing:0.269px;font-weight:bold;color:#000;">0.6</div>
<div style="left:45px;top:658px;width:1258px;height:1px;background-image:repeating-linear-gradient(90deg,#c8c8c8 0 1px,transparent 1px 2px);"></div>
<div class="t" style="left:1321.50px;top:354px;font-size:14.4px;letter-spacing:-0.222px;font-weight:bold;color:#000;">Units</div>
<div class="t" style="left:1719.50px;top:354px;font-size:14.4px;letter-spacing:-0.576px;font-weight:bold;color:#000;">Sales in kUSD</div>
<div style="left:1319px;top:372px;width:376px;height:21px;background:#50b47f;"></div>
<div style="left:1318px;top:371px;width:378px;height:1px;background:#000;"></div>
<div style="left:1318px;top:472px;width:378px;height:1px;background:#000;"></div>
<div style="left:1318px;top:371px;width:1px;height:102px;background:#000;"></div>
<div style="left:1695px;top:371px;width:1px;height:102px;background:#000;"></div>
<div class="t" style="left:1325.60px;top:375.5px;font-size:11.7px;letter-spacing:-0.225px;font-weight:bold;color:#fff;">Forecast based on:</div>
<div class="t" style="left:1321.50px;top:395.5px;font-size:11.7px;letter-spacing:-0.055px;font-weight:bold;color:#000;">3-month Rolling Rate</div>
<div class="t" style="left:1321.50px;top:415.5px;font-size:11.7px;letter-spacing:0.005px;font-weight:bold;color:#000;">2020 Trend 6 months</div>
<div class="t" style="left:1321.50px;top:435.5px;font-size:11.7px;letter-spacing:0.017px;font-weight:bold;color:#000;">2020 Trend 12 months</div>
<div class="t" style="left:1321.50px;top:455.5px;font-size:11.7px;letter-spacing:-0.024px;font-weight:bold;color:#000;">Prior Year exit rate (Q4 x 4)</div>
<div style="left:1717px;top:372px;width:583px;height:21px;background:#50b47f;"></div>
<div style="left:1716px;top:371px;width:585px;height:1px;background:#000;"></div>
<div style="left:1716px;top:472px;width:585px;height:1px;background:#000;"></div>
<div style="left:1716px;top:371px;width:1px;height:102px;background:#000;"></div>
<div style="left:2300px;top:371px;width:1px;height:102px;background:#000;"></div>
<div class="t" style="left:1723.60px;top:375.5px;font-size:11.7px;letter-spacing:-0.225px;font-weight:bold;color:#fff;">Forecast based on:</div>
<div class="t" style="left:1719.50px;top:395.5px;font-size:11.7px;letter-spacing:-0.055px;font-weight:bold;color:#000;">3-month Rolling Rate</div>
<div class="t" style="left:1719.50px;top:415.5px;font-size:11.7px;letter-spacing:0.005px;font-weight:bold;color:#000;">2020 Trend 6 months</div>
<div class="t" style="left:1719.50px;top:435.5px;font-size:11.7px;letter-spacing:0.017px;font-weight:bold;color:#000;">2020 Trend 12 months</div>
<div class="t" style="left:1719.50px;top:455.5px;font-size:11.7px;letter-spacing:-0.024px;font-weight:bold;color:#000;">Prior Year exit rate (Q4 x 4)</div>
<div style="left:1635px;top:392px;width:60px;height:1px;background:#50b47f;"></div>
<div style="left:1318px;top:392px;width:317px;height:1px;background:#000;"></div>
<div style="left:1716px;top:392px;width:585px;height:1px;background:#000;"></div>
<div style="left:1573px;top:371px;width:1px;height:102px;background:#000;"></div>
<div style="left:1634px;top:371px;width:1px;height:102px;background:#000;"></div>
<div class="t" style="left:1597.50px;top:375.5px;font-size:11.7px;letter-spacing:-0.954px;font-weight:bold;color:#fff;">FY</div>
<div class="t" style="left:1648.95px;top:375.5px;font-size:11.7px;letter-spacing:-0.531px;font-weight:bold;color:#fff;">vs. LO</div>
<svg style="left:1574px;top:393px" width="7" height="7"><path d="M0 0h6.500L0 6.500z" fill="#1a7a1a"/></svg>
<svg style="left:1635px;top:393px" width="7" height="7"><path d="M0 0h6.500L0 6.500z" fill="#1a7a1a"/></svg>
<div class="t" style="left:1583.71px;top:396px;font-size:10.5326px;letter-spacing:-0.160px;color:#000;">#VALUE!</div>
<div class="t" style="left:1641.95px;top:395.5px;font-size:11.7px;letter-spacing:-0.349px;font-weight:bold;color:#000;">#VALUE!</div>
<svg style="left:1574px;top:413px" width="7" height="7"><path d="M0 0h6.500L0 6.500z" fill="#1a7a1a"/></svg>
<svg style="left:1635px;top:413px" width="7" height="7"><path d="M0 0h6.500L0 6.500z" fill="#1a7a1a"/></svg>
<div class="t" style="left:1583.71px;top:416px;font-size:10.5326px;letter-spacing:-0.160px;color:#000;">#VALUE!</div>
<div class="t" style="left:1641.95px;top:415.5px;font-size:11.7px;letter-spacing:-0.349px;font-weight:bold;color:#000;">#VALUE!</div>
<svg style="left:1574px;top:433px" width="7" height="7"><path d="M0 0h6.500L0 6.500z" fill="#1a7a1a"/></svg>
<svg style="left:1635px;top:433px" width="7" height="7"><path d="M0 0h6.500L0 6.500z" fill="#1a7a1a"/></svg>
<div class="t" style="left:1583.71px;top:436px;font-size:10.5326px;letter-spacing:-0.160px;color:#000;">#VALUE!</div>
<div class="t" style="left:1641.95px;top:435.5px;font-size:11.7px;letter-spacing:-0.349px;font-weight:bold;color:#000;">#VALUE!</div>
<div class="t" style="left:1597.56px;top:455.5px;font-size:11.7px;letter-spacing:0.214px;color:#000;">4,496</div>
<div class="t" style="left:1648.39px;top:455.5px;font-size:11.7px;letter-spacing:0.209px;color:#ff0000;">-4,219</div>
<div style="left:1319px;top:511px;width:376px;height:21px;background:#50b47f;"></div>
<div style="left:1318px;top:510px;width:378px;height:1px;background:#000;"></div>
<div style="left:1318px;top:567px;width:378px;height:1px;background:#000;"></div>
<div style="left:1318px;top:510px;width:1px;height:58px;background:#000;"></div>
<div style="left:1695px;top:510px;width:1px;height:58px;background:#000;"></div>
<div class="t" style="left:1321.50px;top:514.5px;font-size:11.7px;letter-spacing:-0.214px;font-weight:bold;color:#fff;">Growth vs PY</div>
<div class="t" style="left:1321.50px;top:532.5px;font-size:11.7px;letter-spacing:-0.746px;font-weight:bold;color:#000;">GR%</div>
<div style="left:1717px;top:511px;width:583px;height:21px;background:#50b47f;"></div>
<div style="left:1716px;top:510px;width:585px;height:1px;background:#000;"></div>
<div style="left:1716px;top:567px;width:585px;height:1px;background:#000;"></div>
<div style="left:1716px;top:510px;width:1px;height:58px;background:#000;"></div>
<div style="left:2300px;top:510px;width:1px;height:58px;background:#000;"></div>
<div class="t" style="left:1719.50px;top:514.5px;font-size:11.7px;letter-spacing:-0.214px;font-weight:bold;color:#fff;">Growth vs PY</div>
<div class="t" style="left:1719.50px;top:532.5px;font-size:11.7px;letter-spacing:-0.746px;font-weight:bold;color:#000;">GR%</div>
<div class="t" style="left:1321.50px;top:551.5px;font-size:11.7px;letter-spacing:-0.132px;font-weight:bold;color:#000;">Avg. packs per month</div>
<div class="t" style="left:1719.50px;top:551.5px;font-size:11.7px;letter-spacing:-0.345px;font-weight:bold;color:#000;">Avg. sales</div>
<div style="left:1512px;top:510px;width:1px;height:58px;background:#000;"></div>
<div style="left:1634px;top:510px;width:1px;height:58px;background:#000;"></div>
<div class="t" style="left:1532.29px;top:514.5px;font-size:11.7px;letter-spacing:-0.491px;font-weight:bold;color:#fff;">YTD</div>
<div class="t" style="left:1593.27px;top:514.5px;font-size:11.7px;letter-spacing:-0.799px;font-weight:bold;color:#fff;">YTG</div>
<div class="t" style="left:1650.86px;top:514.5px;font-size:11.7px;letter-spacing:0.170px;font-weight:bold;color:#fff;">Delta</div>
<svg style="left:1574px;top:532px" width="7" height="7"><path d="M0 0h6.500L0 6.500z" fill="#1a7a1a"/></svg>
<div class="t" style="left:1580.95px;top:532.5px;font-size:11.7px;letter-spacing:-0.349px;font-weight:bold;color:#000;">#VALUE!</div>
<div style="left:1319px;top:604px;width:376px;height:17px;background:#50b47f;"></div>
<div style="left:1318px;top:603px;width:378px;height:1px;background:#000;"></div>
<div style="left:1318px;top:709px;width:378px;height:1px;background:#000;"></div>
<div style="left:1318px;top:603px;width:1px;height:107px;background:#000;"></div>
<div style="left:1695px;top:603px;width:1px;height:107px;background:#000;"></div>
<div style="left:1318px;top:620px;width:378px;height:1px;background:#000;"></div>
<div class="t" style="left:1321.50px;top:604.5px;font-size:11.7px;letter-spacing:-0.036px;font-weight:bold;color:#fff;">Units</div>
<div class="t" style="left:1321.50px;top:621.5px;font-size:11.7px;letter-spacing:0.066px;font-weight:bold;color:#000;">2018 Actual</div>
<div class="t" style="left:1321.50px;top:642.5px;font-size:11.7px;letter-spacing:0.066px;font-weight:bold;color:#000;">2019 Actual</div>
<div class="t" style="left:1321.50px;top:659.5px;font-size:11.7px;letter-spacing:-0.031px;font-weight:bold;color:#000;">2020 Budget</div>
<div class="t" style="left:1321.50px;top:676.5px;font-size:11.7px;letter-spacing:0.066px;font-weight:bold;color:#000;">2020 Actual</div>
<div class="t" style="left:1321.50px;top:693.5px;font-size:11.7px;letter-spacing:-0.310px;font-weight:bold;color:#000;">Forecast</div>
<div style="left:1717px;top:604px;width:583px;height:17px;background:#50b47f;"></div>
<div style="left:1716px;top:603px;width:585px;height:1px;background:#000;"></div>
<div style="left:1716px;top:709px;width:585px;height:1px;background:#000;"></div>
<div style="left:1716px;top:603px;width:1px;height:107px;background:#000;"></div>
<div style="left:2300px;top:603px;width:1px;height:107px;background:#000;"></div>
<div style="left:1716px;top:620px;width:585px;height:1px;background:#000;"></div>
<div class="t" style="left:1719.50px;top:604.5px;font-size:11.7px;letter-spacing:-0.478px;font-weight:bold;color:#fff;">Sales</div>
<div class="t" style="left:1719.50px;top:621.5px;font-size:11.7px;letter-spacing:0.066px;font-weight:bold;color:#000;">2018 Actual</div>
<div class="t" style="left:1719.50px;top:642.5px;font-size:11.7px;letter-spacing:0.066px;font-weight:bold;color:#000;">2019 Actual</div>
<div class="t" style="left:1719.50px;top:659.5px;font-size:11.7px;letter-spacing:-0.031px;font-weight:bold;color:#000;">2020 Budget</div>
<div class="t" style="left:1719.50px;top:676.5px;font-size:11.7px;letter-spacing:0.066px;font-weight:bold;color:#000;">2020 Actual</div>
<div class="t" style="left:1719.50px;top:693.5px;font-size:11.7px;letter-spacing:-0.310px;font-weight:bold;color:#000;">Forecast</div>
<div class="t" style="left:1474.62px;top:604.5px;font-size:11.7px;letter-spacing:0.147px;font-weight:bold;color:#fff;">Q1</div>
<div class="t" style="left:1535.62px;top:604.5px;font-size:11.7px;letter-spacing:0.147px;font-weight:bold;color:#fff;">Q2</div>
<div class="t" style="left:1596.62px;top:604.5px;font-size:11.7px;letter-spacing:0.147px;font-weight:bold;color:#fff;">Q3</div>
<div class="t" style="left:1657.62px;top:604.5px;font-size:11.7px;letter-spacing:0.147px;font-weight:bold;color:#fff;">Q4</div>
<div class="t" style="left:1880.62px;top:604.5px;font-size:11.7px;letter-spacing:0.147px;font-weight:bold;color:#fff;">Q1</div>
<div class="t" style="left:1485.68px;top:621.5px;font-size:11.7px;letter-spacing:0.249px;color:#000;">106</div>
<div class="t" style="left:1546.68px;top:621.5px;font-size:11.7px;letter-spacing:0.249px;color:#000;">130</div>
<div class="t" style="left:1607.68px;top:621.5px;font-size:11.7px;letter-spacing:0.249px;color:#000;">146</div>
<div class="t" style="left:1668.68px;top:621.5px;font-size:11.7px;letter-spacing:0.249px;color:#000;">260</div>
<div class="t" style="left:1485.68px;top:640.5px;font-size:11.7px;letter-spacing:0.249px;color:#000;">310</div>
<div class="t" style="left:1546.68px;top:640.5px;font-size:11.7px;letter-spacing:0.249px;color:#000;">402</div>
<div class="t" style="left:1607.68px;top:640.5px;font-size:11.7px;letter-spacing:0.249px;color:#000;">736</div>
<div class="t" style="left:1658.56px;top:640.5px;font-size:11.7px;letter-spacing:0.214px;color:#000;">1,124</div>
<div class="t" style="left:1475.56px;top:659.5px;font-size:11.7px;letter-spacing:0.214px;color:#000;">1,579</div>
<div class="t" style="left:1536.56px;top:659.5px;font-size:11.7px;letter-spacing:0.214px;color:#000;">1,843</div>
<div class="t" style="left:1597.56px;top:659.5px;font-size:11.7px;letter-spacing:0.214px;color:#000;">2,369</div>
<div class="t" style="left:1658.56px;top:659.5px;font-size:11.7px;letter-spacing:0.214px;color:#000;">2,925</div>
<div class="t" style="left:1475.56px;top:676.5px;font-size:11.7px;letter-spacing:0.214px;color:#000;">1,190</div>
<div class="t" style="left:1536.56px;top:676.5px;font-size:11.7px;letter-spacing:0.214px;color:#000;">1,104</div>
<div class="t" style="left:1607.68px;top:676.5px;font-size:11.7px;letter-spacing:0.249px;color:#000;">490</div>
<div class="t" style="left:1671.05px;top:676.5px;font-size:11.7px;color:#000;">-</div>
<div class="t" style="left:1475.56px;top:693.5px;font-size:11.7px;letter-spacing:0.214px;color:#000;">1,190</div>
<div class="t" style="left:1536.56px;top:693.5px;font-size:11.7px;letter-spacing:0.214px;color:#000;">1,104</div>
<div class="t" style="left:1597.56px;top:693.5px;font-size:11.7px;letter-spacing:0.214px;color:#000;">1,989</div>
<div class="t" style="left:1658.56px;top:693.5px;font-size:11.7px;letter-spacing:0.214px;color:#000;">2,744</div>
<div style="left:1319px;top:727px;width:376px;height:17px;background:#50b47f;"></div>
<div style="left:1318px;top:726px;width:378px;height:1px;background:#000;"></div>
<div style="left:1318px;top:794px;width:378px;height:1px;background:#000;"></div>
<div style="left:1318px;top:726px;width:1px;height:69px;background:#000;"></div>
<div style="left:1695px;top:726px;width:1px;height:69px;background:#000;"></div>
<div class="t" style="left:1321.50px;top:727.5px;font-size:11.7px;letter-spacing:-0.014px;font-weight:bold;color:#fff;">Quarter Actuals</div>
<div class="t" style="left:1321.50px;top:744.5px;font-size:11.7px;letter-spacing:-0.096px;font-weight:bold;color:#000;">vs 2018</div>
<div class="t" style="left:1321.50px;top:761.5px;font-size:11.7px;letter-spacing:-0.096px;font-weight:bold;color:#000;">vs 2019</div>
<div class="t" style="left:1321.50px;top:778.5px;font-size:11.7px;letter-spacing:-0.181px;font-weight:bold;color:#000;">Forecast vs. 2019</div>
<div style="left:1717px;top:727px;width:583px;height:17px;background:#50b47f;"></div>
<div style="left:1716px;top:726px;width:585px;height:1px;background:#000;"></div>
<div style="left:1716px;top:794px;width:585px;height:1px;background:#000;"></div>
<div style="left:1716px;top:726px;width:1px;height:69px;background:#000;"></div>
<div style="left:2300px;top:726px;width:1px;height:69px;background:#000;"></div>
<div class="t" style="left:1719.50px;top:727.5px;font-size:11.7px;letter-spacing:-0.014px;font-weight:bold;color:#fff;">Quarter Actuals</div>
<div class="t" style="left:1719.50px;top:744.5px;font-size:11.7px;letter-spacing:-0.096px;font-weight:bold;color:#000;">vs 2018</div>
<div class="t" style="left:1719.50px;top:761.5px;font-size:11.7px;letter-spacing:-0.096px;font-weight:bold;color:#000;">vs 2019</div>
<div class="t" style="left:1719.50px;top:778.5px;font-size:11.7px;letter-spacing:-0.181px;font-weight:bold;color:#000;">Forecast vs. 2019</div>
<div class="t" style="left:1474.62px;top:727.5px;font-size:11.7px;letter-spacing:0.147px;font-weight:bold;color:#fff;">Q1</div>
<div class="t" style="left:1535.62px;top:727.5px;font-size:11.7px;letter-spacing:0.147px;font-weight:bold;color:#fff;">Q2</div>
<div class="t" style="left:1596.62px;top:727.5px;font-size:11.7px;letter-spacing:0.147px;font-weight:bold;color:#fff;">Q3</div>
<div class="t" style="left:1657.62px;top:727.5px;font-size:11.7px;letter-spacing:0.147px;font-weight:bold;color:#fff;">Q4</div>
<div class="t" style="left:1880.62px;top:727.5px;font-size:11.7px;letter-spacing:0.147px;font-weight:bold;color:#fff;">Q1</div>
<div class="t" style="left:1459.03px;top:744.5px;font-size:11.7px;letter-spacing:0.124px;font-weight:bold;color:#008000;">1022.6%</div>
<div class="t" style="left:1523.40px;top:744.5px;font-size:11.7px;letter-spacing:0.103px;font-weight:bold;color:#008000;">749.2%</div>
<div class="t" style="left:1584.40px;top:744.5px;font-size:11.7px;letter-spacing:0.103px;font-weight:bold;color:#008000;">235.6%</div>
<div class="t" style="left:1643.37px;top:744.5px;font-size:11.7px;letter-spacing:0.115px;font-weight:bold;color:#ff0000;">-100.0%</div>
<div class="t" style="left:1868.40px;top:744.5px;font-size:11.7px;letter-spacing:0.103px;font-weight:bold;color:#008000;">344.9%</div>
<div class="t" style="left:1462.40px;top:761.5px;font-size:11.7px;letter-spacing:0.103px;font-weight:bold;color:#008000;">283.9%</div>
<div class="t" style="left:1523.40px;top:761.5px;font-size:11.7px;letter-spacing:0.103px;font-weight:bold;color:#008000;">174.6%</div>
<div class="t" style="left:1585.73px;top:761.5px;font-size:11.7px;letter-spacing:0.093px;font-weight:bold;color:#ff0000;">-33.4%</div>
<div class="t" style="left:1643.37px;top:761.5px;font-size:11.7px;letter-spacing:0.115px;font-weight:bold;color:#ff0000;">-100.0%</div>
<div class="t" style="left:1868.40px;top:761.5px;font-size:11.7px;letter-spacing:0.103px;font-weight:bold;color:#008000;">141.7%</div>
<div class="t" style="left:1462.40px;top:778.5px;font-size:11.7px;letter-spacing:0.103px;font-weight:bold;color:#008000;">283.9%</div>
<div class="t" style="left:1523.40px;top:778.5px;font-size:11.7px;letter-spacing:0.103px;font-weight:bold;color:#008000;">174.6%</div>
<div class="t" style="left:1584.40px;top:778.5px;font-size:11.7px;letter-spacing:0.103px;font-weight:bold;color:#008000;">170.2%</div>
<div class="t" style="left:1645.40px;top:778.5px;font-size:11.7px;letter-spacing:0.103px;font-weight:bold;color:#008000;">144.1%</div>
<div class="t" style="left:1868.40px;top:778.5px;font-size:11.7px;letter-spacing:0.103px;font-weight:bold;color:#008000;">141.7%</div>
<div style="left:1319px;top:812px;width:376px;height:17px;background:#50b47f;"></div>
<div style="left:1318px;top:811px;width:378px;height:1px;background:#000;"></div>
<div style="left:1318px;top:883px;width:378px;height:1px;background:#000;"></div>
<div style="left:1318px;top:811px;width:1px;height:73px;background:#000;"></div>
<div style="left:1695px;top:811px;width:1px;height:73px;background:#000;"></div>
<div class="t" style="left:1321.50px;top:812.5px;font-size:11.7px;letter-spacing:-0.014px;font-weight:bold;color:#fff;">Quarter Actuals</div>
<div class="t" style="left:1321.50px;top:829.5px;font-size:11.7px;letter-spacing:-0.096px;font-weight:bold;color:#000;">vs 2018</div>
<div class="t" style="left:1321.50px;top:846.5px;font-size:11.7px;letter-spacing:-0.096px;font-weight:bold;color:#000;">vs 2019</div>
<div class="t" style="left:1321.50px;top:867.5px;font-size:11.7px;letter-spacing:-0.181px;font-weight:bold;color:#000;">Forecast vs. 2019</div>
<div style="left:1717px;top:812px;width:583px;height:17px;background:#50b47f;"></div>
<div style="left:1716px;top:811px;width:585px;height:1px;background:#000;"></div>
<div style="left:1716px;top:883px;width:585px;height:1px;background:#000;"></div>
<div style="left:1716px;top:811px;width:1px;height:73px;background:#000;"></div>
<div style="left:2300px;top:811px;width:1px;height:73px;background:#000;"></div>
<div class="t" style="left:1719.50px;top:812.5px;font-size:11.7px;letter-spacing:-0.014px;font-weight:bold;color:#fff;">Quarter Actuals</div>
<div class="t" style="left:1719.50px;top:829.5px;font-size:11.7px;letter-spacing:-0.096px;font-weight:bold;color:#000;">vs 2018</div>
<div class="t" style="left:1719.50px;top:846.5px;font-size:11.7px;letter-spacing:-0.096px;font-weight:bold;color:#000;">vs 2019</div>
<div class="t" style="left:1719.50px;top:867.5px;font-size:11.7px;letter-spacing:-0.181px;font-weight:bold;color:#000;">Forecast vs. 2019</div>
<div class="t" style="left:1474.62px;top:812.5px;font-size:11.7px;letter-spacing:0.147px;font-weight:bold;color:#fff;">Q1</div>
<div class="t" style="left:1535.62px;top:812.5px;font-size:11.7px;letter-spacing:0.147px;font-weight:bold;color:#fff;">Q2</div>
<div class="t" style="left:1596.62px;top:812.5px;font-size:11.7px;letter-spacing:0.147px;font-weight:bold;color:#fff;">Q3</div>
<div class="t" style="left:1657.62px;top:812.5px;font-size:11.7px;letter-spacing:0.147px;font-weight:bold;color:#fff;">Q4</div>
<div class="t" style="left:1880.62px;top:812.5px;font-size:11.7px;letter-spacing:0.147px;font-weight:bold;color:#fff;">Q1</div>
<div class="t" style="left:1464.03px;top:829.5px;font-size:11.7px;letter-spacing:0.165px;font-weight:bold;color:#008000;">+1,084</div>
<div class="t" style="left:1530.12px;top:829.5px;font-size:11.7px;letter-spacing:0.138px;font-weight:bold;color:#008000;">+974</div>
<div class="t" style="left:1591.12px;top:829.5px;font-size:11.7px;letter-spacing:0.138px;font-weight:bold;color:#008000;">+344</div>
<div class="t" style="left:1653.44px;top:829.5px;font-size:11.7px;letter-spacing:0.233px;font-weight:bold;color:#ff0000;">-260</div>
<div class="t" style="left:1875.12px;top:829.5px;font-size:11.7px;letter-spacing:0.138px;font-weight:bold;color:#008000;">+571</div>
<div class="t" style="left:1469.12px;top:846.5px;font-size:11.7px;letter-spacing:0.138px;font-weight:bold;color:#008000;">+880</div>
<div class="t" style="left:1530.12px;top:846.5px;font-size:11.7px;letter-spacing:0.138px;font-weight:bold;color:#008000;">+702</div>
<div class="t" style="left:1592.44px;top:846.5px;font-size:11.7px;letter-spacing:0.233px;font-weight:bold;color:#ff0000;">-246</div>
<div class="t" style="left:1648.34px;top:846.5px;font-size:11.7px;letter-spacing:0.228px;font-weight:bold;color:#ff0000;">-1,124</div>
<div class="t" style="left:1875.12px;top:846.5px;font-size:11.7px;letter-spacing:0.138px;font-weight:bold;color:#008000;">+432</div>
<div class="t" style="left:1469.12px;top:867.5px;font-size:11.7px;letter-spacing:0.138px;font-weight:bold;color:#008000;">+880</div>
<div class="t" style="left:1530.12px;top:867.5px;font-size:11.7px;letter-spacing:0.138px;font-weight:bold;color:#008000;">+702</div>
<div class="t" style="left:1586.03px;top:867.5px;font-size:11.7px;letter-spacing:0.165px;font-weight:bold;color:#008000;">+1,253</div>
<div class="t" style="left:1647.03px;top:867.5px;font-size:11.7px;letter-spacing:0.165px;font-weight:bold;color:#008000;">+1,620</div>
<div class="t" style="left:1875.12px;top:867.5px;font-size:11.7px;letter-spacing:0.138px;font-weight:bold;color:#008000;">+432</div>
<div style="left:1319px;top:905px;width:376px;height:17px;background:#50b47f;"></div>
<div style="left:1318px;top:904px;width:378px;height:1px;background:#000;"></div>
<div style="left:1318px;top:988px;width:378px;height:1px;background:#000;"></div>
<div style="left:1318px;top:904px;width:1px;height:85px;background:#000;"></div>
<div style="left:1695px;top:904px;width:1px;height:85px;background:#000;"></div>
<div class="t" style="left:1321.50px;top:905.5px;font-size:11.7px;letter-spacing:-0.338px;font-weight:bold;color:#fff;">QoQ GR%</div>
<div class="t" style="left:1321.50px;top:921.5px;font-size:11.7px;letter-spacing:0.066px;font-weight:bold;color:#000;">2019 Actual</div>
<div class="t" style="left:1321.50px;top:938.5px;font-size:11.7px;letter-spacing:-0.031px;font-weight:bold;color:#000;">2020 Budget</div>
<div class="t" style="left:1321.50px;top:955.5px;font-size:11.7px;letter-spacing:0.066px;font-weight:bold;color:#000;">2020 Actual</div>
<div class="t" style="left:1321.50px;top:972.5px;font-size:11.7px;letter-spacing:-0.310px;font-weight:bold;color:#000;">Forecast</div>
<div style="left:1717px;top:905px;width:583px;height:17px;background:#50b47f;"></div>
<div style="left:1716px;top:904px;width:585px;height:1px;background:#000;"></div>
<div style="left:1716px;top:988px;width:585px;height:1px;background:#000;"></div>
<div style="left:1716px;top:904px;width:1px;height:85px;background:#000;"></div>
<div style="left:2300px;top:904px;width:1px;height:85px;background:#000;"></div>
<div class="t" style="left:1719.50px;top:905.5px;font-size:11.7px;letter-spacing:-0.338px;font-weight:bold;color:#fff;">QoQ GR%</div>
<div class="t" style="left:1719.50px;top:921.5px;font-size:11.7px;letter-spacing:0.066px;font-weight:bold;color:#000;">2019 Actual</div>
<div class="t" style="left:1719.50px;top:938.5px;font-size:11.7px;letter-spacing:-0.031px;font-weight:bold;color:#000;">2020 Budget</div>
<div class="t" style="left:1719.50px;top:955.5px;font-size:11.7px;letter-spacing:0.066px;font-weight:bold;color:#000;">2020 Actual</div>
<div class="t" style="left:1719.50px;top:972.5px;font-size:11.7px;letter-spacing:-0.310px;font-weight:bold;color:#000;">Forecast</div>
<div class="t" style="left:1474.62px;top:905.5px;font-size:11.7px;letter-spacing:0.147px;font-weight:bold;color:#fff;">Q1</div>
<div class="t" style="left:1535.62px;top:905.5px;font-size:11.7px;letter-spacing:0.147px;font-weight:bold;color:#fff;">Q2</div>
<div class="t" style="left:1596.62px;top:905.5px;font-size:11.7px;letter-spacing:0.147px;font-weight:bold;color:#fff;">Q3</div>
<div class="t" style="left:1657.62px;top:905.5px;font-size:11.7px;letter-spacing:0.147px;font-weight:bold;color:#fff;">Q4</div>
<div class="t" style="left:1880.62px;top:905.5px;font-size:11.7px;letter-spacing:0.147px;font-weight:bold;color:#fff;">Q1</div>
<div class="t" style="left:1465.76px;top:921.5px;font-size:11.7px;letter-spacing:0.074px;font-weight:bold;color:#008000;">19.2%</div>
<div class="t" style="left:1526.76px;top:921.5px;font-size:11.7px;letter-spacing:0.074px;font-weight:bold;color:#008000;">29.7%</div>
<div class="t" style="left:1587.76px;top:921.5px;font-size:11.7px;letter-spacing:0.074px;font-weight:bold;color:#008000;">83.1%</div>
<div class="t" style="left:1648.76px;top:921.5px;font-size:11.7px;letter-spacing:0.074px;font-weight:bold;color:#008000;">52.7%</div>
<div class="t" style="left:1871.76px;top:921.5px;font-size:11.7px;letter-spacing:0.074px;font-weight:bold;color:#008000;">19.7%</div>
<div class="t" style="left:1465.76px;top:938.5px;font-size:11.7px;letter-spacing:0.074px;font-weight:bold;color:#008000;">40.5%</div>
<div class="t" style="left:1526.76px;top:938.5px;font-size:11.7px;letter-spacing:0.074px;font-weight:bold;color:#008000;">16.7%</div>
<div class="t" style="left:1587.76px;top:938.5px;font-size:11.7px;letter-spacing:0.074px;font-weight:bold;color:#008000;">28.5%</div>
<div class="t" style="left:1648.76px;top:938.5px;font-size:11.7px;letter-spacing:0.074px;font-weight:bold;color:#008000;">23.5%</div>
<div class="t" style="left:1871.76px;top:938.5px;font-size:11.7px;letter-spacing:0.074px;font-weight:bold;color:#008000;">23.0%</div>
<div class="t" style="left:1469.12px;top:955.5px;font-size:11.7px;letter-spacing:0.031px;font-weight:bold;color:#008000;">5.9%</div>
<div class="t" style="left:1528.10px;top:955.5px;font-size:11.7px;letter-spacing:0.061px;font-weight:bold;color:#ff0000;">-7.2%</div>
<div class="t" style="left:1585.73px;top:955.5px;font-size:11.7px;letter-spacing:0.093px;font-weight:bold;color:#ff0000;">-55.6%</div>
<div class="t" style="left:1875.12px;top:955.5px;font-size:11.7px;letter-spacing:0.031px;font-weight:bold;color:#008000;">6.2%</div>
<div class="t" style="left:1469.12px;top:972.5px;font-size:11.7px;letter-spacing:0.031px;font-weight:bold;color:#008000;">5.9%</div>
<div class="t" style="left:1528.10px;top:972.5px;font-size:11.7px;letter-spacing:0.061px;font-weight:bold;color:#ff0000;">-7.2%</div>
<div class="t" style="left:1587.76px;top:972.5px;font-size:11.7px;letter-spacing:0.074px;font-weight:bold;color:#008000;">80.1%</div>
<div class="t" style="left:1648.76px;top:972.5px;font-size:11.7px;letter-spacing:0.074px;font-weight:bold;color:#008000;">38.0%</div>
<div class="t" style="left:1875.12px;top:972.5px;font-size:11.7px;letter-spacing:0.031px;font-weight:bold;color:#008000;">6.2%</div>
<svg style="left:1513px;top:955px" width="7" height="7"><path d="M0 0h6.500L0 6.500z" fill="#1a7a1a"/></svg>
<svg style="left:1574px;top:955px" width="7" height="7"><path d="M0 0h6.500L0 6.500z" fill="#1a7a1a"/></svg>
<svg style="left:1635px;top:955px" width="7" height="7"><path d="M0 0h6.500L0 6.500z" fill="#1a7a1a"/></svg>
<div style="left:33px;top:757px;width:1263px;height:300px;background:#fff;border:1px solid #000;box-sizing:border-box;"></div>
<svg style="left:0;top:757px" width="1898" height="260" viewBox="0 757 1898 260"><path d="M86.500 968.5H1280.500" stroke="#d9d9d9" stroke-width="1"/><path d="M86.500 946.5H1280.500" stroke="#d9d9d9" stroke-width="1"/><path d="M86.500 923.5H1280.500" stroke="#d9d9d9" stroke-width="1"/><path d="M86.500 901.5H1280.500" stroke="#d9d9d9" stroke-width="1"/><path d="M86.500 878.5H1280.500" stroke="#d9d9d9" stroke-width="1"/><path d="M86.500 856.5H1280.500" stroke="#d9d9d9" stroke-width="1"/><path d="M86.500 833.5H1280.500" stroke="#d9d9d9" stroke-width="1"/><path d="M86.500 810.5H1280.500" stroke="#d9d9d9" stroke-width="1"/><path d="M86.500 788.5H1280.500" stroke="#d9d9d9" stroke-width="1"/><polyline points="111.0,933.4 160.9,957.7 210.8,942.4 260.7,949.6 310.6,944.2 360.5,898.3 410.5,886.6 460.4,885.7 510.3,869.5 560.2,847.0 610.1,820.9 660.0,799.3 709.9,991.0" fill="none" stroke="#50b47f" stroke-width="2.600" stroke-linejoin="round" stroke-linecap="round"/></svg>
<div class="t" style="left:63.33px;top:961px;font-size:10.67px;font-weight:bold;color:#000;">50</div>
<div class="t" style="left:57.40px;top:938px;font-size:10.67px;font-weight:bold;color:#000;">100</div>
<div class="t" style="left:57.40px;top:916px;font-size:10.67px;font-weight:bold;color:#000;">150</div>
<div class="t" style="left:57.40px;top:893px;font-size:10.67px;font-weight:bold;color:#000;">200</div>
<div class="t" style="left:57.40px;top:870px;font-size:10.67px;font-weight:bold;color:#000;">250</div>
<div class="t" style="left:57.40px;top:848px;font-size:10.67px;font-weight:bold;color:#000;">300</div>
<div class="t" style="left:57.40px;top:825px;font-size:10.67px;font-weight:bold;color:#000;">350</div>
<div class="t" style="left:57.40px;top:803px;font-size:10.67px;font-weight:bold;color:#000;">400</div>
<div class="t" style="left:57.40px;top:780px;font-size:10.67px;font-weight:bold;color:#000;">450</div>
<div class="t" style="left:644.97px;top:767.5px;font-size:15.4px;letter-spacing:-0.260px;font-weight:bold;color:#000;">Units</div>
</div>
<div style="left:0px;top:990px;width:1920px;height:28px;background:#e6e6e6;"></div>
<div style="left:0px;top:990px;width:1898px;height:1px;background:#9a9a9a;"></div>
<svg style="left:24px;top:998px" width="40" height="12"><path d="M7.500 2v7.500L3 5.750z" fill="#c3c3c3"/><path d="M31.500 2v7.500L36 5.750z" fill="#c3c3c3"/></svg>
<div style="left:103px;top:993px;width:96px;height:22px;background:#c00000;"></div>
<div class="t" style="left:115.00px;top:995.5px;font-size:13px;letter-spacing:0.131px;color:#fff;">Introduction</div>
<div style="left:204px;top:993px;width:74px;height:22px;background:#8fd0ac;"></div>
<div class="t" style="left:214.25px;top:995.5px;font-size:13px;letter-spacing:0.376px;color:#1a1a1a;">Mapping</div>
<div style="left:283px;top:993px;width:133px;height:22px;background:#d9d9d9;"></div>
<div class="t" style="left:294.25px;top:995.5px;font-size:13px;letter-spacing:0.141px;color:#1a1a1a;">Bridges for Trends</div>
<div style="left:421px;top:993px;width:83px;height:22px;background:#8fd0ac;"></div>
<div class="t" style="left:431.25px;top:995.5px;font-size:13px;letter-spacing:-0.309px;color:#1a1a1a;">Sales Data</div>
<div style="left:509px;top:993px;width:81px;height:22px;background:#8fd0ac;"></div>
<div class="t" style="left:520.00px;top:995.5px;font-size:13px;letter-spacing:0.042px;color:#1a1a1a;">Units sold</div>
<div style="left:595px;top:993px;width:77px;height:22px;background:#50b47f;"></div>
<div class="t" style="left:606.25px;top:995.5px;font-size:13px;letter-spacing:-0.267px;color:#1a1a1a;">Summary</div>
<div style="left:677px;top:993px;width:57px;height:22px;background:#50b47f;"></div>
<div class="t" style="left:687.50px;top:995.5px;font-size:13px;letter-spacing:-0.428px;color:#1a1a1a;">Chairs</div>
<div style="left:739px;top:993px;width:59px;height:22px;background:#50b47f;"></div>
<div class="t" style="left:749.50px;top:995.5px;font-size:13px;letter-spacing:-0.055px;color:#1a1a1a;">Tables</div>
<div style="left:873px;top:993px;width:88px;height:22px;background:#50b47f;"></div>
<div class="t" style="left:883.25px;top:995.5px;font-size:13px;letter-spacing:-0.257px;color:#1a1a1a;">Accessories</div>
<div style="left:100.5px;top:994px;width:1px;height:20px;background:#9a9a9a;"></div>
<div style="left:201px;top:994px;width:1px;height:20px;background:#9a9a9a;"></div>
<div style="left:280px;top:994px;width:1px;height:20px;background:#9a9a9a;"></div>
<div style="left:418.5px;top:994px;width:1px;height:20px;background:#9a9a9a;"></div>
<div style="left:506.5px;top:994px;width:1px;height:20px;background:#9a9a9a;"></div>
<div style="left:592px;top:994px;width:1px;height:20px;background:#9a9a9a;"></div>
<div style="left:674px;top:994px;width:1px;height:20px;background:#9a9a9a;"></div>
<div style="left:736px;top:994px;width:1px;height:20px;background:#9a9a9a;"></div>
<div style="left:963px;top:994px;width:1px;height:20px;background:#9a9a9a;"></div>
<div style="left:800px;top:990px;width:71px;height:25px;background:linear-gradient(#fff 0,#fff 45%,#cfe8da 100%);border-left:1px solid #ababab;border-right:1px solid #ababab;border-bottom:2px solid #217346;box-sizing:border-box;"></div>
<div class="t" style="left:812.50px;top:995.5px;font-size:13px;letter-spacing:-0.382px;font-weight:bold;color:#217346;">Kitchen</div>
<svg style="left:996px;top:995px" width="18" height="18" viewBox="0 0 18 18"><circle cx="9" cy="9" r="7.700" fill="none" stroke="#6a6a6a" stroke-width="1.100"/><path d="M9 5v8M5 9h8" stroke="#6a6a6a" stroke-width="1.500"/></svg>
<div style="left:1152px;top:999px;width:2px;height:2px;background:#b0b0b0;"></div>
<div style="left:1152px;top:1003px;width:2px;height:2px;background:#b0b0b0;"></div>
<div style="left:1152px;top:1007px;width:2px;height:2px;background:#b0b0b0;"></div>
<div style="left:1184px;top:997px;width:700px;height:15px;background:#d9d9d9;"></div>
<div style="left:1169px;top:997px;width:15px;height:15px;background:#fff;border:1px solid #ababab;box-sizing:border-box;"></div>
<svg style="left:1173px;top:1000px" width="6" height="9"><path d="M5.500 .5v8L.8 4.500z" fill="#555"/></svg>
<div style="left:1194px;top:997px;width:90px;height:15px;background:#fff;border:1px solid #c4c4c4;box-sizing:border-box;"></div>
<div style="left:1884px;top:997px;width:15px;height:15px;background:#fff;border:1px solid #ababab;box-sizing:border-box;"></div>
<svg style="left:1889px;top:1000px" width="6" height="9"><path d="M.5 .5v8l4.700-4z" fill="#555"/></svg>
<div style="left:0px;top:1018px;width:1920px;height:1px;background:#c8c8c8;"></div>
<div style="left:0px;top:1019px;width:1920px;height:21px;background:#f3f3f3;"></div>
<div class="t" style="left:7.50px;top:1022px;font-size:11.5px;letter-spacing:-0.548px;color:#3c3c3c;">Ready</div>
<div style="left:1620px;top:1019px;width:40px;height:21px;background:#c6c6c6;"></div>
<svg style="left:1633px;top:1022px" width="14" height="14" viewBox="0 0 14 14"><g fill="none" stroke="#6a6a6a"><path d="M.5 .5h12v12H.5zM4.500 .5v12M8.500 .5v12M.5 4.500h12M.5 8.500h12"/></g></svg>
<svg style="left:1673px;top:1022px" width="15" height="14" viewBox="0 0 15 14"><g fill="none" stroke="#6a6a6a"><path d="M.5 .5h13v12H.5zM3.500 2.500h7v8h-7z"/><path d="M5 4.500h4M5 6.500h4M5 8.500h4"/></g></svg>
<svg style="left:1713px;top:1022px" width="15" height="14" viewBox="0 0 15 14"><g fill="none" stroke="#6a6a6a"><path d="M.5 .5h13v12H.5z"/><path d="M4.500 .5v6.500M8.500 .5v6.500M.5 7h8"/></g></svg>
<div style="left:1746px;top:1028px;width:8px;height:1px;background:#444;"></div>
<div style="left:1759px;top:1028.5px;width:100px;height:1px;background:#a0a0a0;"></div>
<div style="left:1807px;top:1024px;width:5px;height:11px;background:#6a6a6a;"></div>
<div style="left:1864px;top:1028px;width:8px;height:1px;background:#444;"></div>
<div style="left:1867.5px;top:1024.5px;width:1px;height:8px;background:#444;"></div>
<div class="t" style="left:1885.60px;top:1021px;font-size:11px;letter-spacing:-0.483px;color:#3c3c3c;">100%</div>
<div style="left:0px;top:1040px;width:1920px;height:8px;background:#d3e3ea;"></div>
<div style="left:49px;top:1041px;width:342px;height:8px;background:#fff;border:1px solid #9aa7ad;box-sizing:border-box;"></div>
<div style="left:838px;top:1040px;width:40px;height:8px;background:#9fd5a4;"></div>
<div style="left:1030px;top:1040px;width:48px;height:8px;background:#eaf1f4;"></div>
<div style="left:1915px;top:1040px;width:1px;height:8px;background:#5c6b72;"></div>
<div class="t" style="left:1813.20px;top:1042px;font-size:12px;letter-spacing:-0.261px;color:#000;">2:13 AM</div>
</div></body></html>
